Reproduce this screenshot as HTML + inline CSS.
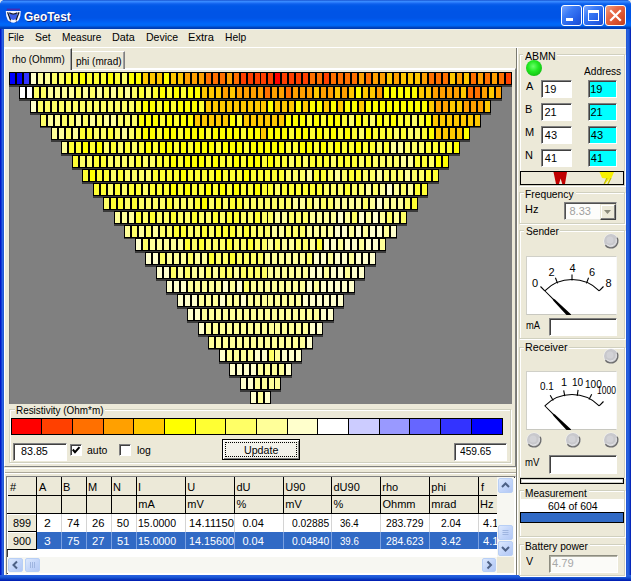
<!DOCTYPE html>
<html><head><meta charset="utf-8"><style>
*{box-sizing:border-box;margin:0;padding:0}
html,body{width:631px;height:581px;overflow:hidden;background:#dfe6f0}
body{position:relative;font-family:"Liberation Sans", sans-serif;font-size:11px;color:#000}
.a{position:absolute}
.t{position:absolute;white-space:nowrap;line-height:1;transform-origin:0 0}
.edit{position:absolute;background:#fff;border:1px solid;border-color:#7f9db9}
.gb{position:absolute;border:1px solid #d0d0bf;box-shadow:inset 1px 1px 0 #fff, 1px 1px 0 #fff}
.led{position:absolute;border-radius:50%}
</style></head><body>
<div class="a" style="left:0px;top:0px;width:631px;height:581px;background:#0046d8;border-radius:5px 5px 0 0"></div><div class="a" style="left:0px;top:0px;width:631px;height:29px;border-radius:5px 5px 0 0;background:linear-gradient(to bottom,#0a3fc0 0px,#3c8eff 1px,#3285ff 2px,#1e6ff5 3px,#0d60ec 4px,#0058e8 6px,#0054e6 12px,#0054e6 18px,#005cf2 21px,#0068fa 24px,#0064f0 26px,#0048c8 27px,#003aac 29px)"></div><div class="a" style="left:0px;top:29px;width:4px;height:552px;background:linear-gradient(to right,#0018c8 0,#0018c8 1px,#2a62e2 2px,#2a62e2 3px,#1e50c0 4px)"></div><div class="a" style="left:626px;top:29px;width:5px;height:552px;background:linear-gradient(to right,#1a4ec8 0,#2a62e2 1px,#1d5ad8 3px,#0018b0 5px)"></div><div class="a" style="left:0px;top:575px;width:631px;height:6px;background:linear-gradient(to bottom,#2a62e2 0,#1d5ad8 2px,#0a3cc0 4px,#0018b0 6px)"></div><svg class="a" style="left:4px;top:6px" width="20" height="20" viewBox="0 0 20 20">
<rect x="2.8" y="2.6" width="13.2" height="1.6" fill="#4a2ab0"/>
<path d="M1.8 5 H16.8 Q16.8 16.8 9.3 16.8 Q1.8 16.8 1.8 5 Z" fill="#f4f6ff"/>
<path d="M5 7 Q9.3 9.5 13.6 7 L12.5 12.8 Q9.3 15 6.1 12.8 Z" fill="#3a5ee8"/>
<path d="M3.6 6.2 L6.6 14.4 M15 6.2 L12 14.4 M5.2 6.8 Q9.3 9.3 13.4 6.8" stroke="#101830" stroke-width="1.3" fill="none"/>
<path d="M5.5 15.6 L7 16.4 M11.5 16.4 L13 15.6" stroke="#203080" stroke-width="1"/>
</svg><div class="t" style="left:23.74px;top:10px;font-size:13px;font-weight:bold;color:#fff;transform:scaleX(0.917);text-shadow:1px 1px 0 #0a1e7a;">GeoTest</div><div class="a" style="left:561px;top:5px;width:21px;height:21px;border:1px solid #fff;border-radius:3px;background:linear-gradient(135deg,#7aa6ff 0%,#3a7af5 35%,#2560e8 70%,#1c4cd0 100%)"><svg class="a" style="left:-1px;top:-1px" width="21" height="21"><rect x="5" y="13" width="7" height="3" fill="#fff"/></svg></div><div class="a" style="left:583px;top:5px;width:21px;height:21px;border:1px solid #fff;border-radius:3px;background:linear-gradient(135deg,#7aa6ff 0%,#3a7af5 35%,#2560e8 70%,#1c4cd0 100%)"><svg class="a" style="left:-1px;top:-1px" width="21" height="21"><rect x="5.5" y="5.5" width="10" height="10" fill="none" stroke="#fff" stroke-width="1"/><rect x="5" y="5" width="11" height="3" fill="#fff"/></svg></div><div class="a" style="left:605px;top:5px;width:21px;height:21px;border:1px solid #fff;border-radius:3px;background:linear-gradient(135deg,#f0a080 0%,#e86a48 35%,#d8502c 70%,#c04020 100%)"><svg class="a" style="left:-1px;top:-1px" width="21" height="21"><path d="M6 6 L15 15 M15 6 L6 15" stroke="#fff" stroke-width="2.2" stroke-linecap="square"/></svg></div><div class="a" style="left:4px;top:29px;width:622px;height:546px;background:#ece9d8"></div><div class="a" style="left:4px;top:29px;width:622px;height:1px;background:#e4ecf4"></div><div class="t" style="left:8.38px;top:32px;font-size:11px;color:#000;transform:scaleX(0.908);">File</div><div class="t" style="left:35.32px;top:32px;font-size:11px;color:#000;transform:scaleX(0.950);">Set</div><div class="t" style="left:62.37px;top:32px;font-size:11px;color:#000;transform:scaleX(0.918);">Measure</div><div class="t" style="left:112.32px;top:32px;font-size:11px;color:#000;transform:scaleX(0.982);">Data</div><div class="t" style="left:145.64px;top:32px;font-size:11px;color:#000;transform:scaleX(0.957);">Device</div><div class="t" style="left:188.39px;top:32px;font-size:11px;color:#000;transform:scaleX(1.012);">Extra</div><div class="t" style="left:224.66px;top:32px;font-size:11px;color:#000;transform:scaleX(0.934);">Help</div><div class="a" style="left:4px;top:47px;width:512px;height:1px;background:#fff"></div><div class="a" style="left:4px;top:68px;width:512px;height:399px;border:1px solid;border-color:#fff #808080 #808080 #fff;box-shadow:inset 0 1px 0 #fff;background:#ece9d8"></div><div class="a" style="left:71px;top:51px;width:54px;height:18px;border:1px solid;border-bottom:none;border-color:#fff #808080 #808080 #fff;background:#ece9d8;box-shadow:inset -1px 0 0 #a0a0a0"></div><div class="t" style="left:75.56px;top:56px;font-size:11px;color:#000;transform:scaleX(0.908);">phi (mrad)</div><div class="a" style="left:4px;top:48px;width:68px;height:22px;border:1px solid;border-bottom:none;border-color:#fff #404040 #808080 #fff;background:#ece9d8;box-shadow:inset -1px 0 0 #a0a0a0"></div><div class="t" style="left:12.18px;top:54px;font-size:11px;color:#000;transform:scaleX(0.889);">rho (Ohmm)</div><div class="a" style="left:9px;top:72px;width:503px;height:332px;background:#808080;border-left:1px solid #747474"></div><svg class="a" style="left:0;top:0" width="631" height="581"><g stroke="#000" stroke-width="1" shape-rendering="crispEdges"><rect x="9" y="84" width="503" height="3" fill="#3a3a3a" stroke="none"/><rect x="9.5" y="72.5" width="6" height="12" fill="#0000ff"/><rect x="16.5" y="72.5" width="6" height="12" fill="#0000ff"/><rect x="23.5" y="72.5" width="6" height="12" fill="#3333ff"/><rect x="30.5" y="72.5" width="6" height="12" fill="#ffffcc"/><rect x="37.5" y="72.5" width="6" height="12" fill="#ffff99"/><rect x="44.5" y="72.5" width="6" height="12" fill="#ffff99"/><rect x="51.5" y="72.5" width="6" height="12" fill="#ffff66"/><rect x="58.5" y="72.5" width="6" height="12" fill="#ffff66"/><rect x="65.5" y="72.5" width="6" height="12" fill="#ffff33"/><rect x="72.5" y="72.5" width="6" height="12" fill="#ffff33"/><rect x="79.5" y="72.5" width="6" height="12" fill="#ffff00"/><rect x="86.5" y="72.5" width="6" height="12" fill="#ffff33"/><rect x="93.5" y="72.5" width="6" height="12" fill="#ffff33"/><rect x="100.5" y="72.5" width="6" height="12" fill="#ffff33"/><rect x="107.5" y="72.5" width="6" height="12" fill="#ffff00"/><rect x="114.5" y="72.5" width="6" height="12" fill="#ffff33"/><rect x="121.5" y="72.5" width="6" height="12" fill="#ffff66"/><rect x="128.5" y="72.5" width="6" height="12" fill="#ffff00"/><rect x="135.5" y="72.5" width="6" height="12" fill="#ffff00"/><rect x="142.5" y="72.5" width="6" height="12" fill="#ffc800"/><rect x="149.5" y="72.5" width="6" height="12" fill="#ffc800"/><rect x="156.5" y="72.5" width="6" height="12" fill="#ffc800"/><rect x="163.5" y="72.5" width="6" height="12" fill="#ffff00"/><rect x="170.5" y="72.5" width="6" height="12" fill="#ffc800"/><rect x="177.5" y="72.5" width="6" height="12" fill="#ffc800"/><rect x="184.5" y="72.5" width="6" height="12" fill="#ffa000"/><rect x="191.5" y="72.5" width="6" height="12" fill="#ffa000"/><rect x="198.5" y="72.5" width="6" height="12" fill="#ffa000"/><rect x="205.5" y="72.5" width="6" height="12" fill="#ff7000"/><rect x="212.5" y="72.5" width="6" height="12" fill="#ff7000"/><rect x="219.5" y="72.5" width="6" height="12" fill="#ff7000"/><rect x="226.5" y="72.5" width="6" height="12" fill="#ffa000"/><rect x="233.5" y="72.5" width="6" height="12" fill="#ff7000"/><rect x="240.5" y="72.5" width="6" height="12" fill="#ff4000"/><rect x="247.5" y="72.5" width="6" height="12" fill="#ff4000"/><rect x="254.5" y="72.5" width="6" height="12" fill="#ff4000"/><rect x="260.5" y="72.5" width="6" height="12" fill="#ff4000"/><rect x="267.5" y="72.5" width="6" height="12" fill="#ff4000"/><rect x="274.5" y="72.5" width="6" height="12" fill="#ff0000"/><rect x="281.5" y="72.5" width="6" height="12" fill="#ff4000"/><rect x="288.5" y="72.5" width="6" height="12" fill="#ff4000"/><rect x="295.5" y="72.5" width="6" height="12" fill="#ff4000"/><rect x="302.5" y="72.5" width="6" height="12" fill="#ff4000"/><rect x="309.5" y="72.5" width="6" height="12" fill="#ff7000"/><rect x="316.5" y="72.5" width="6" height="12" fill="#ff7000"/><rect x="323.5" y="72.5" width="6" height="12" fill="#ff4000"/><rect x="330.5" y="72.5" width="6" height="12" fill="#ff7000"/><rect x="337.5" y="72.5" width="6" height="12" fill="#ff7000"/><rect x="344.5" y="72.5" width="6" height="12" fill="#ff7000"/><rect x="351.5" y="72.5" width="6" height="12" fill="#ff7000"/><rect x="358.5" y="72.5" width="6" height="12" fill="#ffa000"/><rect x="365.5" y="72.5" width="6" height="12" fill="#ff7000"/><rect x="372.5" y="72.5" width="6" height="12" fill="#ffa000"/><rect x="379.5" y="72.5" width="6" height="12" fill="#ffa000"/><rect x="386.5" y="72.5" width="6" height="12" fill="#ffc800"/><rect x="393.5" y="72.5" width="6" height="12" fill="#ffa000"/><rect x="400.5" y="72.5" width="6" height="12" fill="#ffc800"/><rect x="407.5" y="72.5" width="6" height="12" fill="#ffc800"/><rect x="414.5" y="72.5" width="6" height="12" fill="#ffc800"/><rect x="421.5" y="72.5" width="6" height="12" fill="#ffa000"/><rect x="428.5" y="72.5" width="6" height="12" fill="#ff7000"/><rect x="435.5" y="72.5" width="6" height="12" fill="#ff7000"/><rect x="442.5" y="72.5" width="6" height="12" fill="#ff7000"/><rect x="449.5" y="72.5" width="6" height="12" fill="#ffc800"/><rect x="456.5" y="72.5" width="6" height="12" fill="#ffa000"/><rect x="463.5" y="72.5" width="6" height="12" fill="#ffc800"/><rect x="470.5" y="72.5" width="6" height="12" fill="#ff7000"/><rect x="477.5" y="72.5" width="6" height="12" fill="#ffa000"/><rect x="484.5" y="72.5" width="6" height="12" fill="#ff7000"/><rect x="491.5" y="72.5" width="6" height="12" fill="#ffa000"/><rect x="498.5" y="72.5" width="6" height="12" fill="#ff7000"/><rect x="505.5" y="72.5" width="6" height="12" fill="#ff4000"/><rect x="19" y="98" width="483" height="3" fill="#3a3a3a" stroke="none"/><rect x="19.5" y="86.5" width="6" height="12" fill="#ffffff"/><rect x="26.5" y="86.5" width="6" height="12" fill="#ffffff"/><rect x="33.5" y="86.5" width="6" height="12" fill="#ffff66"/><rect x="40.5" y="86.5" width="6" height="12" fill="#ffff66"/><rect x="47.5" y="86.5" width="6" height="12" fill="#ffff99"/><rect x="54.5" y="86.5" width="6" height="12" fill="#ffff99"/><rect x="61.5" y="86.5" width="6" height="12" fill="#ffff99"/><rect x="68.5" y="86.5" width="6" height="12" fill="#ffff99"/><rect x="75.5" y="86.5" width="6" height="12" fill="#ffff66"/><rect x="82.5" y="86.5" width="6" height="12" fill="#ffff99"/><rect x="89.5" y="86.5" width="6" height="12" fill="#ffff66"/><rect x="96.5" y="86.5" width="6" height="12" fill="#ffff99"/><rect x="103.5" y="86.5" width="6" height="12" fill="#ffff66"/><rect x="110.5" y="86.5" width="6" height="12" fill="#ffff99"/><rect x="117.5" y="86.5" width="6" height="12" fill="#ffff66"/><rect x="124.5" y="86.5" width="6" height="12" fill="#ffff99"/><rect x="131.5" y="86.5" width="6" height="12" fill="#ffff66"/><rect x="138.5" y="86.5" width="6" height="12" fill="#ffff33"/><rect x="145.5" y="86.5" width="6" height="12" fill="#ffff66"/><rect x="152.5" y="86.5" width="6" height="12" fill="#ffff33"/><rect x="159.5" y="86.5" width="6" height="12" fill="#ffff00"/><rect x="166.5" y="86.5" width="6" height="12" fill="#ffff33"/><rect x="173.5" y="86.5" width="6" height="12" fill="#ffff00"/><rect x="180.5" y="86.5" width="6" height="12" fill="#ffff33"/><rect x="187.5" y="86.5" width="6" height="12" fill="#ffff00"/><rect x="194.5" y="86.5" width="6" height="12" fill="#ffff00"/><rect x="201.5" y="86.5" width="6" height="12" fill="#ffc800"/><rect x="208.5" y="86.5" width="6" height="12" fill="#ffc800"/><rect x="215.5" y="86.5" width="6" height="12" fill="#ffc800"/><rect x="222.5" y="86.5" width="6" height="12" fill="#ffa000"/><rect x="229.5" y="86.5" width="6" height="12" fill="#ffc800"/><rect x="236.5" y="86.5" width="6" height="12" fill="#ffa000"/><rect x="243.5" y="86.5" width="6" height="12" fill="#ffa000"/><rect x="250.5" y="86.5" width="6" height="12" fill="#ffa000"/><rect x="257.5" y="86.5" width="6" height="12" fill="#ffa000"/><rect x="264.5" y="86.5" width="6" height="12" fill="#ff7000"/><rect x="271.5" y="86.5" width="6" height="12" fill="#ffa000"/><rect x="278.5" y="86.5" width="6" height="12" fill="#ffa000"/><rect x="285.5" y="86.5" width="6" height="12" fill="#ff7000"/><rect x="292.5" y="86.5" width="6" height="12" fill="#ffa000"/><rect x="299.5" y="86.5" width="6" height="12" fill="#ffa000"/><rect x="306.5" y="86.5" width="6" height="12" fill="#ffa000"/><rect x="313.5" y="86.5" width="6" height="12" fill="#ffc800"/><rect x="320.5" y="86.5" width="6" height="12" fill="#ffa000"/><rect x="327.5" y="86.5" width="6" height="12" fill="#ffa000"/><rect x="334.5" y="86.5" width="6" height="12" fill="#ffc800"/><rect x="341.5" y="86.5" width="6" height="12" fill="#ffa000"/><rect x="348.5" y="86.5" width="6" height="12" fill="#ffc800"/><rect x="355.5" y="86.5" width="6" height="12" fill="#ffff00"/><rect x="362.5" y="86.5" width="6" height="12" fill="#ffc800"/><rect x="369.5" y="86.5" width="6" height="12" fill="#ffc800"/><rect x="376.5" y="86.5" width="6" height="12" fill="#ffa000"/><rect x="383.5" y="86.5" width="6" height="12" fill="#ffff00"/><rect x="390.5" y="86.5" width="6" height="12" fill="#ffff00"/><rect x="397.5" y="86.5" width="6" height="12" fill="#ffff00"/><rect x="404.5" y="86.5" width="6" height="12" fill="#ffff00"/><rect x="411.5" y="86.5" width="6" height="12" fill="#ffff00"/><rect x="418.5" y="86.5" width="6" height="12" fill="#ffc800"/><rect x="425.5" y="86.5" width="6" height="12" fill="#ffc800"/><rect x="432.5" y="86.5" width="6" height="12" fill="#ffa000"/><rect x="439.5" y="86.5" width="6" height="12" fill="#ffa000"/><rect x="446.5" y="86.5" width="6" height="12" fill="#ffa000"/><rect x="453.5" y="86.5" width="6" height="12" fill="#ffa000"/><rect x="460.5" y="86.5" width="6" height="12" fill="#ffc800"/><rect x="467.5" y="86.5" width="6" height="12" fill="#ff7000"/><rect x="474.5" y="86.5" width="6" height="12" fill="#ff7000"/><rect x="481.5" y="86.5" width="6" height="12" fill="#ffa000"/><rect x="488.5" y="86.5" width="6" height="12" fill="#ffc800"/><rect x="495.5" y="86.5" width="6" height="12" fill="#ffa000"/><rect x="30" y="112" width="461" height="3" fill="#3a3a3a" stroke="none"/><rect x="30.5" y="100.5" width="6" height="12" fill="#ffffcc"/><rect x="37.5" y="100.5" width="6" height="12" fill="#ffff66"/><rect x="44.5" y="100.5" width="6" height="12" fill="#ffff66"/><rect x="51.5" y="100.5" width="6" height="12" fill="#ffff66"/><rect x="58.5" y="100.5" width="6" height="12" fill="#ffff66"/><rect x="65.5" y="100.5" width="6" height="12" fill="#ffff66"/><rect x="72.5" y="100.5" width="6" height="12" fill="#ffff66"/><rect x="79.5" y="100.5" width="6" height="12" fill="#ffff66"/><rect x="86.5" y="100.5" width="6" height="12" fill="#ffff66"/><rect x="93.5" y="100.5" width="6" height="12" fill="#ffff66"/><rect x="100.5" y="100.5" width="6" height="12" fill="#ffff66"/><rect x="107.5" y="100.5" width="6" height="12" fill="#ffff66"/><rect x="114.5" y="100.5" width="6" height="12" fill="#ffff66"/><rect x="121.5" y="100.5" width="6" height="12" fill="#ffff66"/><rect x="128.5" y="100.5" width="6" height="12" fill="#ffff66"/><rect x="135.5" y="100.5" width="6" height="12" fill="#ffff33"/><rect x="142.5" y="100.5" width="6" height="12" fill="#ffff00"/><rect x="149.5" y="100.5" width="6" height="12" fill="#ffff00"/><rect x="156.5" y="100.5" width="6" height="12" fill="#ffff33"/><rect x="163.5" y="100.5" width="6" height="12" fill="#ffff00"/><rect x="170.5" y="100.5" width="6" height="12" fill="#ffff33"/><rect x="177.5" y="100.5" width="6" height="12" fill="#ffff00"/><rect x="184.5" y="100.5" width="6" height="12" fill="#ffff00"/><rect x="191.5" y="100.5" width="6" height="12" fill="#ffff00"/><rect x="198.5" y="100.5" width="6" height="12" fill="#ffff33"/><rect x="205.5" y="100.5" width="6" height="12" fill="#ffc800"/><rect x="212.5" y="100.5" width="6" height="12" fill="#ffc800"/><rect x="219.5" y="100.5" width="6" height="12" fill="#ffc800"/><rect x="226.5" y="100.5" width="6" height="12" fill="#ffc800"/><rect x="233.5" y="100.5" width="6" height="12" fill="#ffc800"/><rect x="240.5" y="100.5" width="6" height="12" fill="#ffc800"/><rect x="247.5" y="100.5" width="6" height="12" fill="#ffc800"/><rect x="254.5" y="100.5" width="6" height="12" fill="#ffc800"/><rect x="260.5" y="100.5" width="6" height="12" fill="#ffc800"/><rect x="267.5" y="100.5" width="6" height="12" fill="#ffff00"/><rect x="274.5" y="100.5" width="6" height="12" fill="#ffc800"/><rect x="281.5" y="100.5" width="6" height="12" fill="#ffc800"/><rect x="288.5" y="100.5" width="6" height="12" fill="#ffc800"/><rect x="295.5" y="100.5" width="6" height="12" fill="#ffff00"/><rect x="302.5" y="100.5" width="6" height="12" fill="#ffc800"/><rect x="309.5" y="100.5" width="6" height="12" fill="#ffff00"/><rect x="316.5" y="100.5" width="6" height="12" fill="#ffff00"/><rect x="323.5" y="100.5" width="6" height="12" fill="#ffc800"/><rect x="330.5" y="100.5" width="6" height="12" fill="#ffff00"/><rect x="337.5" y="100.5" width="6" height="12" fill="#ffc800"/><rect x="344.5" y="100.5" width="6" height="12" fill="#ffff00"/><rect x="351.5" y="100.5" width="6" height="12" fill="#ffff00"/><rect x="358.5" y="100.5" width="6" height="12" fill="#ffc800"/><rect x="365.5" y="100.5" width="6" height="12" fill="#ffff00"/><rect x="372.5" y="100.5" width="6" height="12" fill="#ffff00"/><rect x="379.5" y="100.5" width="6" height="12" fill="#ffff00"/><rect x="386.5" y="100.5" width="6" height="12" fill="#ffff00"/><rect x="393.5" y="100.5" width="6" height="12" fill="#ffff00"/><rect x="400.5" y="100.5" width="6" height="12" fill="#ffff00"/><rect x="407.5" y="100.5" width="6" height="12" fill="#ffff00"/><rect x="414.5" y="100.5" width="6" height="12" fill="#ffff00"/><rect x="421.5" y="100.5" width="6" height="12" fill="#ffff00"/><rect x="428.5" y="100.5" width="6" height="12" fill="#ffc800"/><rect x="435.5" y="100.5" width="6" height="12" fill="#ffa000"/><rect x="442.5" y="100.5" width="6" height="12" fill="#ffa000"/><rect x="449.5" y="100.5" width="6" height="12" fill="#ffc800"/><rect x="456.5" y="100.5" width="6" height="12" fill="#ffc800"/><rect x="463.5" y="100.5" width="6" height="12" fill="#ffa000"/><rect x="470.5" y="100.5" width="6" height="12" fill="#ffa000"/><rect x="477.5" y="100.5" width="6" height="12" fill="#ffa000"/><rect x="484.5" y="100.5" width="6" height="12" fill="#ffc800"/><rect x="40" y="126" width="441" height="2" fill="#3a3a3a" stroke="none"/><rect x="40.5" y="114.5" width="6" height="12" fill="#ffff66"/><rect x="47.5" y="114.5" width="6" height="12" fill="#ffff99"/><rect x="54.5" y="114.5" width="6" height="12" fill="#ffff99"/><rect x="61.5" y="114.5" width="6" height="12" fill="#ffff66"/><rect x="68.5" y="114.5" width="6" height="12" fill="#ffff66"/><rect x="75.5" y="114.5" width="6" height="12" fill="#ffff99"/><rect x="82.5" y="114.5" width="6" height="12" fill="#ffff66"/><rect x="89.5" y="114.5" width="6" height="12" fill="#ffff99"/><rect x="96.5" y="114.5" width="6" height="12" fill="#ffff66"/><rect x="103.5" y="114.5" width="6" height="12" fill="#ffff99"/><rect x="110.5" y="114.5" width="6" height="12" fill="#ffff99"/><rect x="117.5" y="114.5" width="6" height="12" fill="#ffff66"/><rect x="124.5" y="114.5" width="6" height="12" fill="#ffff66"/><rect x="131.5" y="114.5" width="6" height="12" fill="#ffff66"/><rect x="138.5" y="114.5" width="6" height="12" fill="#ffff00"/><rect x="145.5" y="114.5" width="6" height="12" fill="#ffff00"/><rect x="152.5" y="114.5" width="6" height="12" fill="#ffff00"/><rect x="159.5" y="114.5" width="6" height="12" fill="#ffff33"/><rect x="166.5" y="114.5" width="6" height="12" fill="#ffff00"/><rect x="173.5" y="114.5" width="6" height="12" fill="#ffff33"/><rect x="180.5" y="114.5" width="6" height="12" fill="#ffff00"/><rect x="187.5" y="114.5" width="6" height="12" fill="#ffff00"/><rect x="194.5" y="114.5" width="6" height="12" fill="#ffc800"/><rect x="201.5" y="114.5" width="6" height="12" fill="#ffc800"/><rect x="208.5" y="114.5" width="6" height="12" fill="#ffc800"/><rect x="215.5" y="114.5" width="6" height="12" fill="#ffc800"/><rect x="222.5" y="114.5" width="6" height="12" fill="#ffc800"/><rect x="229.5" y="114.5" width="6" height="12" fill="#ffff00"/><rect x="236.5" y="114.5" width="6" height="12" fill="#ffff33"/><rect x="243.5" y="114.5" width="6" height="12" fill="#ffc800"/><rect x="250.5" y="114.5" width="6" height="12" fill="#ffc800"/><rect x="257.5" y="114.5" width="6" height="12" fill="#ffc800"/><rect x="264.5" y="114.5" width="6" height="12" fill="#ffc800"/><rect x="271.5" y="114.5" width="6" height="12" fill="#ffc800"/><rect x="278.5" y="114.5" width="6" height="12" fill="#ffc800"/><rect x="285.5" y="114.5" width="6" height="12" fill="#ffff00"/><rect x="292.5" y="114.5" width="6" height="12" fill="#ffff00"/><rect x="299.5" y="114.5" width="6" height="12" fill="#ffff00"/><rect x="306.5" y="114.5" width="6" height="12" fill="#ffff33"/><rect x="313.5" y="114.5" width="6" height="12" fill="#ffff00"/><rect x="320.5" y="114.5" width="6" height="12" fill="#ffff33"/><rect x="327.5" y="114.5" width="6" height="12" fill="#ffff00"/><rect x="334.5" y="114.5" width="6" height="12" fill="#ffff00"/><rect x="341.5" y="114.5" width="6" height="12" fill="#ffff33"/><rect x="348.5" y="114.5" width="6" height="12" fill="#ffff66"/><rect x="355.5" y="114.5" width="6" height="12" fill="#ffff00"/><rect x="362.5" y="114.5" width="6" height="12" fill="#ffff33"/><rect x="369.5" y="114.5" width="6" height="12" fill="#ffff66"/><rect x="376.5" y="114.5" width="6" height="12" fill="#ffff00"/><rect x="383.5" y="114.5" width="6" height="12" fill="#ffff33"/><rect x="390.5" y="114.5" width="6" height="12" fill="#ffff00"/><rect x="397.5" y="114.5" width="6" height="12" fill="#ffff33"/><rect x="404.5" y="114.5" width="6" height="12" fill="#ffff33"/><rect x="411.5" y="114.5" width="6" height="12" fill="#ffff66"/><rect x="418.5" y="114.5" width="6" height="12" fill="#ffff33"/><rect x="425.5" y="114.5" width="6" height="12" fill="#ffff00"/><rect x="432.5" y="114.5" width="6" height="12" fill="#ffc800"/><rect x="439.5" y="114.5" width="6" height="12" fill="#ffc800"/><rect x="446.5" y="114.5" width="6" height="12" fill="#ffc800"/><rect x="453.5" y="114.5" width="6" height="12" fill="#ffc800"/><rect x="460.5" y="114.5" width="6" height="12" fill="#ffc800"/><rect x="467.5" y="114.5" width="6" height="12" fill="#ffc800"/><rect x="474.5" y="114.5" width="6" height="12" fill="#ffc800"/><rect x="51" y="139" width="419" height="3" fill="#3a3a3a" stroke="none"/><rect x="51.5" y="127.5" width="6" height="12" fill="#ffff99"/><rect x="58.5" y="127.5" width="6" height="12" fill="#ffff99"/><rect x="65.5" y="127.5" width="6" height="12" fill="#ffff66"/><rect x="72.5" y="127.5" width="6" height="12" fill="#ffff99"/><rect x="79.5" y="127.5" width="6" height="12" fill="#ffff33"/><rect x="86.5" y="127.5" width="6" height="12" fill="#ffff33"/><rect x="93.5" y="127.5" width="6" height="12" fill="#ffff66"/><rect x="100.5" y="127.5" width="6" height="12" fill="#ffff66"/><rect x="107.5" y="127.5" width="6" height="12" fill="#ffff33"/><rect x="114.5" y="127.5" width="6" height="12" fill="#ffff66"/><rect x="121.5" y="127.5" width="6" height="12" fill="#ffff99"/><rect x="128.5" y="127.5" width="6" height="12" fill="#ffff66"/><rect x="135.5" y="127.5" width="6" height="12" fill="#ffff33"/><rect x="142.5" y="127.5" width="6" height="12" fill="#ffff00"/><rect x="149.5" y="127.5" width="6" height="12" fill="#ffff00"/><rect x="156.5" y="127.5" width="6" height="12" fill="#ffff33"/><rect x="163.5" y="127.5" width="6" height="12" fill="#ffff00"/><rect x="170.5" y="127.5" width="6" height="12" fill="#ffff00"/><rect x="177.5" y="127.5" width="6" height="12" fill="#ffff33"/><rect x="184.5" y="127.5" width="6" height="12" fill="#ffff00"/><rect x="191.5" y="127.5" width="6" height="12" fill="#ffff00"/><rect x="198.5" y="127.5" width="6" height="12" fill="#ffff00"/><rect x="205.5" y="127.5" width="6" height="12" fill="#ffff33"/><rect x="212.5" y="127.5" width="6" height="12" fill="#ffff00"/><rect x="219.5" y="127.5" width="6" height="12" fill="#ffff00"/><rect x="226.5" y="127.5" width="6" height="12" fill="#ffff00"/><rect x="233.5" y="127.5" width="6" height="12" fill="#ffff00"/><rect x="240.5" y="127.5" width="6" height="12" fill="#ffff33"/><rect x="247.5" y="127.5" width="6" height="12" fill="#ffff00"/><rect x="254.5" y="127.5" width="6" height="12" fill="#ffff00"/><rect x="260.5" y="127.5" width="6" height="12" fill="#ffc800"/><rect x="267.5" y="127.5" width="6" height="12" fill="#ffff00"/><rect x="274.5" y="127.5" width="6" height="12" fill="#ffff00"/><rect x="281.5" y="127.5" width="6" height="12" fill="#ffff00"/><rect x="288.5" y="127.5" width="6" height="12" fill="#ffff33"/><rect x="295.5" y="127.5" width="6" height="12" fill="#ffff00"/><rect x="302.5" y="127.5" width="6" height="12" fill="#ffff00"/><rect x="309.5" y="127.5" width="6" height="12" fill="#ffff33"/><rect x="316.5" y="127.5" width="6" height="12" fill="#ffff00"/><rect x="323.5" y="127.5" width="6" height="12" fill="#ffff33"/><rect x="330.5" y="127.5" width="6" height="12" fill="#ffff00"/><rect x="337.5" y="127.5" width="6" height="12" fill="#ffff33"/><rect x="344.5" y="127.5" width="6" height="12" fill="#ffff00"/><rect x="351.5" y="127.5" width="6" height="12" fill="#ffff33"/><rect x="358.5" y="127.5" width="6" height="12" fill="#ffff66"/><rect x="365.5" y="127.5" width="6" height="12" fill="#ffff00"/><rect x="372.5" y="127.5" width="6" height="12" fill="#ffff33"/><rect x="379.5" y="127.5" width="6" height="12" fill="#ffff33"/><rect x="386.5" y="127.5" width="6" height="12" fill="#ffff33"/><rect x="393.5" y="127.5" width="6" height="12" fill="#ffff66"/><rect x="400.5" y="127.5" width="6" height="12" fill="#ffff33"/><rect x="407.5" y="127.5" width="6" height="12" fill="#ffff66"/><rect x="414.5" y="127.5" width="6" height="12" fill="#ffff66"/><rect x="421.5" y="127.5" width="6" height="12" fill="#ffff33"/><rect x="428.5" y="127.5" width="6" height="12" fill="#ffff00"/><rect x="435.5" y="127.5" width="6" height="12" fill="#ffc800"/><rect x="442.5" y="127.5" width="6" height="12" fill="#ffc800"/><rect x="449.5" y="127.5" width="6" height="12" fill="#ffc800"/><rect x="456.5" y="127.5" width="6" height="12" fill="#ffc800"/><rect x="463.5" y="127.5" width="6" height="12" fill="#ffff00"/><rect x="61" y="153" width="399" height="3" fill="#3a3a3a" stroke="none"/><rect x="61.5" y="141.5" width="6" height="12" fill="#ffff99"/><rect x="68.5" y="141.5" width="6" height="12" fill="#ffff33"/><rect x="75.5" y="141.5" width="6" height="12" fill="#ffff33"/><rect x="82.5" y="141.5" width="6" height="12" fill="#ffff00"/><rect x="89.5" y="141.5" width="6" height="12" fill="#ffff33"/><rect x="96.5" y="141.5" width="6" height="12" fill="#ffff00"/><rect x="103.5" y="141.5" width="6" height="12" fill="#ffff66"/><rect x="110.5" y="141.5" width="6" height="12" fill="#ffff33"/><rect x="117.5" y="141.5" width="6" height="12" fill="#ffff66"/><rect x="124.5" y="141.5" width="6" height="12" fill="#ffff33"/><rect x="131.5" y="141.5" width="6" height="12" fill="#ffff66"/><rect x="138.5" y="141.5" width="6" height="12" fill="#ffff33"/><rect x="145.5" y="141.5" width="6" height="12" fill="#ffff00"/><rect x="152.5" y="141.5" width="6" height="12" fill="#ffff33"/><rect x="159.5" y="141.5" width="6" height="12" fill="#ffff00"/><rect x="166.5" y="141.5" width="6" height="12" fill="#ffff00"/><rect x="173.5" y="141.5" width="6" height="12" fill="#ffff33"/><rect x="180.5" y="141.5" width="6" height="12" fill="#ffff00"/><rect x="187.5" y="141.5" width="6" height="12" fill="#ffff33"/><rect x="194.5" y="141.5" width="6" height="12" fill="#ffff00"/><rect x="201.5" y="141.5" width="6" height="12" fill="#ffff00"/><rect x="208.5" y="141.5" width="6" height="12" fill="#ffff00"/><rect x="215.5" y="141.5" width="6" height="12" fill="#ffff33"/><rect x="222.5" y="141.5" width="6" height="12" fill="#ffff00"/><rect x="229.5" y="141.5" width="6" height="12" fill="#ffff00"/><rect x="236.5" y="141.5" width="6" height="12" fill="#ffff00"/><rect x="243.5" y="141.5" width="6" height="12" fill="#ffff33"/><rect x="250.5" y="141.5" width="6" height="12" fill="#ffff00"/><rect x="257.5" y="141.5" width="6" height="12" fill="#ffff00"/><rect x="264.5" y="141.5" width="6" height="12" fill="#ffff00"/><rect x="271.5" y="141.5" width="6" height="12" fill="#ffff00"/><rect x="278.5" y="141.5" width="6" height="12" fill="#ffff00"/><rect x="285.5" y="141.5" width="6" height="12" fill="#ffff33"/><rect x="292.5" y="141.5" width="6" height="12" fill="#ffff33"/><rect x="299.5" y="141.5" width="6" height="12" fill="#ffff00"/><rect x="306.5" y="141.5" width="6" height="12" fill="#ffff00"/><rect x="313.5" y="141.5" width="6" height="12" fill="#ffff33"/><rect x="320.5" y="141.5" width="6" height="12" fill="#ffff00"/><rect x="327.5" y="141.5" width="6" height="12" fill="#ffff33"/><rect x="334.5" y="141.5" width="6" height="12" fill="#ffff00"/><rect x="341.5" y="141.5" width="6" height="12" fill="#ffff33"/><rect x="348.5" y="141.5" width="6" height="12" fill="#ffff33"/><rect x="355.5" y="141.5" width="6" height="12" fill="#ffff00"/><rect x="362.5" y="141.5" width="6" height="12" fill="#ffff33"/><rect x="369.5" y="141.5" width="6" height="12" fill="#ffff33"/><rect x="376.5" y="141.5" width="6" height="12" fill="#ffff66"/><rect x="383.5" y="141.5" width="6" height="12" fill="#ffff33"/><rect x="390.5" y="141.5" width="6" height="12" fill="#ffff99"/><rect x="397.5" y="141.5" width="6" height="12" fill="#ffff99"/><rect x="404.5" y="141.5" width="6" height="12" fill="#ffff66"/><rect x="411.5" y="141.5" width="6" height="12" fill="#ffff66"/><rect x="418.5" y="141.5" width="6" height="12" fill="#ffff66"/><rect x="425.5" y="141.5" width="6" height="12" fill="#ffff33"/><rect x="432.5" y="141.5" width="6" height="12" fill="#ffff33"/><rect x="439.5" y="141.5" width="6" height="12" fill="#ffff33"/><rect x="446.5" y="141.5" width="6" height="12" fill="#ffff33"/><rect x="453.5" y="141.5" width="6" height="12" fill="#ffff00"/><rect x="72" y="167" width="377" height="3" fill="#3a3a3a" stroke="none"/><rect x="72.5" y="155.5" width="6" height="12" fill="#ffff33"/><rect x="79.5" y="155.5" width="6" height="12" fill="#ffff66"/><rect x="86.5" y="155.5" width="6" height="12" fill="#ffff66"/><rect x="93.5" y="155.5" width="6" height="12" fill="#ffff33"/><rect x="100.5" y="155.5" width="6" height="12" fill="#ffff33"/><rect x="107.5" y="155.5" width="6" height="12" fill="#ffff66"/><rect x="114.5" y="155.5" width="6" height="12" fill="#ffff66"/><rect x="121.5" y="155.5" width="6" height="12" fill="#ffff66"/><rect x="128.5" y="155.5" width="6" height="12" fill="#ffff66"/><rect x="135.5" y="155.5" width="6" height="12" fill="#ffff33"/><rect x="142.5" y="155.5" width="6" height="12" fill="#ffff66"/><rect x="149.5" y="155.5" width="6" height="12" fill="#ffff66"/><rect x="156.5" y="155.5" width="6" height="12" fill="#ffff33"/><rect x="163.5" y="155.5" width="6" height="12" fill="#ffff33"/><rect x="170.5" y="155.5" width="6" height="12" fill="#ffff00"/><rect x="177.5" y="155.5" width="6" height="12" fill="#ffff33"/><rect x="184.5" y="155.5" width="6" height="12" fill="#ffff00"/><rect x="191.5" y="155.5" width="6" height="12" fill="#ffff00"/><rect x="198.5" y="155.5" width="6" height="12" fill="#ffff00"/><rect x="205.5" y="155.5" width="6" height="12" fill="#ffff33"/><rect x="212.5" y="155.5" width="6" height="12" fill="#ffff00"/><rect x="219.5" y="155.5" width="6" height="12" fill="#ffff33"/><rect x="226.5" y="155.5" width="6" height="12" fill="#ffff33"/><rect x="233.5" y="155.5" width="6" height="12" fill="#ffff00"/><rect x="240.5" y="155.5" width="6" height="12" fill="#ffff33"/><rect x="247.5" y="155.5" width="6" height="12" fill="#ffff00"/><rect x="254.5" y="155.5" width="6" height="12" fill="#ffff00"/><rect x="261.5" y="155.5" width="6" height="12" fill="#ffff33"/><rect x="267.5" y="155.5" width="6" height="12" fill="#ffff00"/><rect x="274.5" y="155.5" width="6" height="12" fill="#ffff33"/><rect x="281.5" y="155.5" width="6" height="12" fill="#ffff33"/><rect x="288.5" y="155.5" width="6" height="12" fill="#ffff66"/><rect x="295.5" y="155.5" width="6" height="12" fill="#ffff33"/><rect x="302.5" y="155.5" width="6" height="12" fill="#ffff66"/><rect x="309.5" y="155.5" width="6" height="12" fill="#ffff33"/><rect x="316.5" y="155.5" width="6" height="12" fill="#ffff33"/><rect x="323.5" y="155.5" width="6" height="12" fill="#ffff33"/><rect x="330.5" y="155.5" width="6" height="12" fill="#ffff66"/><rect x="337.5" y="155.5" width="6" height="12" fill="#ffff33"/><rect x="344.5" y="155.5" width="6" height="12" fill="#ffff33"/><rect x="351.5" y="155.5" width="6" height="12" fill="#ffff33"/><rect x="358.5" y="155.5" width="6" height="12" fill="#ffff66"/><rect x="365.5" y="155.5" width="6" height="12" fill="#ffff33"/><rect x="372.5" y="155.5" width="6" height="12" fill="#ffff66"/><rect x="379.5" y="155.5" width="6" height="12" fill="#ffff66"/><rect x="386.5" y="155.5" width="6" height="12" fill="#ffff66"/><rect x="393.5" y="155.5" width="6" height="12" fill="#ffff66"/><rect x="400.5" y="155.5" width="6" height="12" fill="#ffff99"/><rect x="407.5" y="155.5" width="6" height="12" fill="#ffff99"/><rect x="414.5" y="155.5" width="6" height="12" fill="#ffff33"/><rect x="421.5" y="155.5" width="6" height="12" fill="#ffff33"/><rect x="428.5" y="155.5" width="6" height="12" fill="#ffff66"/><rect x="435.5" y="155.5" width="6" height="12" fill="#ffff00"/><rect x="442.5" y="155.5" width="6" height="12" fill="#ffff00"/><rect x="82" y="181" width="357" height="3" fill="#3a3a3a" stroke="none"/><rect x="82.5" y="169.5" width="6" height="12" fill="#ffff33"/><rect x="89.5" y="169.5" width="6" height="12" fill="#ffff00"/><rect x="96.5" y="169.5" width="6" height="12" fill="#ffff33"/><rect x="103.5" y="169.5" width="6" height="12" fill="#ffff33"/><rect x="110.5" y="169.5" width="6" height="12" fill="#ffff66"/><rect x="117.5" y="169.5" width="6" height="12" fill="#ffff33"/><rect x="124.5" y="169.5" width="6" height="12" fill="#ffff66"/><rect x="131.5" y="169.5" width="6" height="12" fill="#ffff66"/><rect x="138.5" y="169.5" width="6" height="12" fill="#ffff66"/><rect x="145.5" y="169.5" width="6" height="12" fill="#ffff66"/><rect x="152.5" y="169.5" width="6" height="12" fill="#ffff33"/><rect x="159.5" y="169.5" width="6" height="12" fill="#ffff33"/><rect x="166.5" y="169.5" width="6" height="12" fill="#ffff33"/><rect x="173.5" y="169.5" width="6" height="12" fill="#ffff33"/><rect x="180.5" y="169.5" width="6" height="12" fill="#ffff00"/><rect x="187.5" y="169.5" width="6" height="12" fill="#ffff33"/><rect x="194.5" y="169.5" width="6" height="12" fill="#ffff33"/><rect x="201.5" y="169.5" width="6" height="12" fill="#ffff33"/><rect x="208.5" y="169.5" width="6" height="12" fill="#ffff33"/><rect x="215.5" y="169.5" width="6" height="12" fill="#ffff00"/><rect x="222.5" y="169.5" width="6" height="12" fill="#ffff33"/><rect x="229.5" y="169.5" width="6" height="12" fill="#ffff33"/><rect x="236.5" y="169.5" width="6" height="12" fill="#ffff33"/><rect x="243.5" y="169.5" width="6" height="12" fill="#ffff00"/><rect x="250.5" y="169.5" width="6" height="12" fill="#ffff33"/><rect x="257.5" y="169.5" width="6" height="12" fill="#ffff33"/><rect x="264.5" y="169.5" width="6" height="12" fill="#ffff33"/><rect x="271.5" y="169.5" width="6" height="12" fill="#ffff33"/><rect x="278.5" y="169.5" width="6" height="12" fill="#ffff33"/><rect x="285.5" y="169.5" width="6" height="12" fill="#ffff66"/><rect x="292.5" y="169.5" width="6" height="12" fill="#ffff66"/><rect x="299.5" y="169.5" width="6" height="12" fill="#ffff66"/><rect x="306.5" y="169.5" width="6" height="12" fill="#ffff99"/><rect x="313.5" y="169.5" width="6" height="12" fill="#ffff33"/><rect x="320.5" y="169.5" width="6" height="12" fill="#ffff33"/><rect x="327.5" y="169.5" width="6" height="12" fill="#ffff66"/><rect x="334.5" y="169.5" width="6" height="12" fill="#ffff99"/><rect x="341.5" y="169.5" width="6" height="12" fill="#ffff66"/><rect x="348.5" y="169.5" width="6" height="12" fill="#ffff33"/><rect x="355.5" y="169.5" width="6" height="12" fill="#ffff33"/><rect x="362.5" y="169.5" width="6" height="12" fill="#ffff66"/><rect x="369.5" y="169.5" width="6" height="12" fill="#ffff66"/><rect x="376.5" y="169.5" width="6" height="12" fill="#ffff99"/><rect x="383.5" y="169.5" width="6" height="12" fill="#ffff66"/><rect x="390.5" y="169.5" width="6" height="12" fill="#ffff66"/><rect x="397.5" y="169.5" width="6" height="12" fill="#ffff66"/><rect x="404.5" y="169.5" width="6" height="12" fill="#ffff99"/><rect x="411.5" y="169.5" width="6" height="12" fill="#ffff66"/><rect x="418.5" y="169.5" width="6" height="12" fill="#ffff66"/><rect x="425.5" y="169.5" width="6" height="12" fill="#ffff33"/><rect x="432.5" y="169.5" width="6" height="12" fill="#ffff33"/><rect x="93" y="195" width="335" height="3" fill="#3a3a3a" stroke="none"/><rect x="93.5" y="183.5" width="6" height="12" fill="#ffff33"/><rect x="100.5" y="183.5" width="6" height="12" fill="#ffff33"/><rect x="107.5" y="183.5" width="6" height="12" fill="#ffff66"/><rect x="114.5" y="183.5" width="6" height="12" fill="#ffff33"/><rect x="121.5" y="183.5" width="6" height="12" fill="#ffff66"/><rect x="128.5" y="183.5" width="6" height="12" fill="#ffff33"/><rect x="135.5" y="183.5" width="6" height="12" fill="#ffff33"/><rect x="142.5" y="183.5" width="6" height="12" fill="#ffff66"/><rect x="149.5" y="183.5" width="6" height="12" fill="#ffff33"/><rect x="156.5" y="183.5" width="6" height="12" fill="#ffff33"/><rect x="163.5" y="183.5" width="6" height="12" fill="#ffff33"/><rect x="170.5" y="183.5" width="6" height="12" fill="#ffff00"/><rect x="177.5" y="183.5" width="6" height="12" fill="#ffff33"/><rect x="184.5" y="183.5" width="6" height="12" fill="#ffff00"/><rect x="191.5" y="183.5" width="6" height="12" fill="#ffff33"/><rect x="198.5" y="183.5" width="6" height="12" fill="#ffff33"/><rect x="205.5" y="183.5" width="6" height="12" fill="#ffff00"/><rect x="212.5" y="183.5" width="6" height="12" fill="#ffff33"/><rect x="219.5" y="183.5" width="6" height="12" fill="#ffff00"/><rect x="226.5" y="183.5" width="6" height="12" fill="#ffff33"/><rect x="233.5" y="183.5" width="6" height="12" fill="#ffff00"/><rect x="240.5" y="183.5" width="6" height="12" fill="#ffff33"/><rect x="247.5" y="183.5" width="6" height="12" fill="#ffff33"/><rect x="254.5" y="183.5" width="6" height="12" fill="#ffff00"/><rect x="261.5" y="183.5" width="6" height="12" fill="#ffff33"/><rect x="267.5" y="183.5" width="6" height="12" fill="#ffff33"/><rect x="274.5" y="183.5" width="6" height="12" fill="#ffff66"/><rect x="281.5" y="183.5" width="6" height="12" fill="#ffff33"/><rect x="288.5" y="183.5" width="6" height="12" fill="#ffff33"/><rect x="295.5" y="183.5" width="6" height="12" fill="#ffff33"/><rect x="302.5" y="183.5" width="6" height="12" fill="#ffff33"/><rect x="309.5" y="183.5" width="6" height="12" fill="#ffff33"/><rect x="316.5" y="183.5" width="6" height="12" fill="#ffff33"/><rect x="323.5" y="183.5" width="6" height="12" fill="#ffff66"/><rect x="330.5" y="183.5" width="6" height="12" fill="#ffff66"/><rect x="337.5" y="183.5" width="6" height="12" fill="#ffff66"/><rect x="344.5" y="183.5" width="6" height="12" fill="#ffff33"/><rect x="351.5" y="183.5" width="6" height="12" fill="#ffff66"/><rect x="358.5" y="183.5" width="6" height="12" fill="#ffff66"/><rect x="365.5" y="183.5" width="6" height="12" fill="#ffff99"/><rect x="372.5" y="183.5" width="6" height="12" fill="#ffff66"/><rect x="379.5" y="183.5" width="6" height="12" fill="#ffff99"/><rect x="386.5" y="183.5" width="6" height="12" fill="#ffffcc"/><rect x="393.5" y="183.5" width="6" height="12" fill="#ffff99"/><rect x="400.5" y="183.5" width="6" height="12" fill="#ffff66"/><rect x="407.5" y="183.5" width="6" height="12" fill="#ffff99"/><rect x="414.5" y="183.5" width="6" height="12" fill="#ffff33"/><rect x="421.5" y="183.5" width="6" height="12" fill="#ffff33"/><rect x="103" y="209" width="315" height="3" fill="#3a3a3a" stroke="none"/><rect x="103.5" y="197.5" width="6" height="12" fill="#ffff66"/><rect x="110.5" y="197.5" width="6" height="12" fill="#ffff33"/><rect x="117.5" y="197.5" width="6" height="12" fill="#ffff33"/><rect x="124.5" y="197.5" width="6" height="12" fill="#ffff66"/><rect x="131.5" y="197.5" width="6" height="12" fill="#ffff33"/><rect x="138.5" y="197.5" width="6" height="12" fill="#ffff66"/><rect x="145.5" y="197.5" width="6" height="12" fill="#ffff66"/><rect x="152.5" y="197.5" width="6" height="12" fill="#ffff66"/><rect x="159.5" y="197.5" width="6" height="12" fill="#ffff66"/><rect x="166.5" y="197.5" width="6" height="12" fill="#ffff33"/><rect x="173.5" y="197.5" width="6" height="12" fill="#ffff66"/><rect x="180.5" y="197.5" width="6" height="12" fill="#ffff66"/><rect x="187.5" y="197.5" width="6" height="12" fill="#ffff66"/><rect x="194.5" y="197.5" width="6" height="12" fill="#ffff33"/><rect x="201.5" y="197.5" width="6" height="12" fill="#ffff00"/><rect x="208.5" y="197.5" width="6" height="12" fill="#ffff66"/><rect x="215.5" y="197.5" width="6" height="12" fill="#ffff33"/><rect x="222.5" y="197.5" width="6" height="12" fill="#ffff66"/><rect x="229.5" y="197.5" width="6" height="12" fill="#ffff33"/><rect x="236.5" y="197.5" width="6" height="12" fill="#ffff33"/><rect x="243.5" y="197.5" width="6" height="12" fill="#ffff66"/><rect x="250.5" y="197.5" width="6" height="12" fill="#ffff66"/><rect x="257.5" y="197.5" width="6" height="12" fill="#ffff66"/><rect x="264.5" y="197.5" width="6" height="12" fill="#ffff66"/><rect x="271.5" y="197.5" width="6" height="12" fill="#ffff66"/><rect x="278.5" y="197.5" width="6" height="12" fill="#ffff66"/><rect x="285.5" y="197.5" width="6" height="12" fill="#ffff66"/><rect x="292.5" y="197.5" width="6" height="12" fill="#ffff99"/><rect x="299.5" y="197.5" width="6" height="12" fill="#ffff99"/><rect x="306.5" y="197.5" width="6" height="12" fill="#ffff66"/><rect x="313.5" y="197.5" width="6" height="12" fill="#ffff99"/><rect x="320.5" y="197.5" width="6" height="12" fill="#ffff66"/><rect x="327.5" y="197.5" width="6" height="12" fill="#ffff66"/><rect x="334.5" y="197.5" width="6" height="12" fill="#ffff99"/><rect x="341.5" y="197.5" width="6" height="12" fill="#ffff99"/><rect x="348.5" y="197.5" width="6" height="12" fill="#ffff99"/><rect x="355.5" y="197.5" width="6" height="12" fill="#ffff99"/><rect x="362.5" y="197.5" width="6" height="12" fill="#ffff66"/><rect x="369.5" y="197.5" width="6" height="12" fill="#ffff99"/><rect x="376.5" y="197.5" width="6" height="12" fill="#ffffcc"/><rect x="383.5" y="197.5" width="6" height="12" fill="#ffff99"/><rect x="390.5" y="197.5" width="6" height="12" fill="#ffff99"/><rect x="397.5" y="197.5" width="6" height="12" fill="#ffff99"/><rect x="404.5" y="197.5" width="6" height="12" fill="#ffff66"/><rect x="411.5" y="197.5" width="6" height="12" fill="#ffff33"/><rect x="114" y="223" width="293" height="3" fill="#3a3a3a" stroke="none"/><rect x="114.5" y="211.5" width="6" height="12" fill="#ffff99"/><rect x="121.5" y="211.5" width="6" height="12" fill="#ffff99"/><rect x="128.5" y="211.5" width="6" height="12" fill="#ffff99"/><rect x="135.5" y="211.5" width="6" height="12" fill="#ffff33"/><rect x="142.5" y="211.5" width="6" height="12" fill="#ffff66"/><rect x="149.5" y="211.5" width="6" height="12" fill="#ffff33"/><rect x="156.5" y="211.5" width="6" height="12" fill="#ffff66"/><rect x="163.5" y="211.5" width="6" height="12" fill="#ffff66"/><rect x="170.5" y="211.5" width="6" height="12" fill="#ffff33"/><rect x="177.5" y="211.5" width="6" height="12" fill="#ffff66"/><rect x="184.5" y="211.5" width="6" height="12" fill="#ffff66"/><rect x="191.5" y="211.5" width="6" height="12" fill="#ffff33"/><rect x="198.5" y="211.5" width="6" height="12" fill="#ffff66"/><rect x="205.5" y="211.5" width="6" height="12" fill="#ffff66"/><rect x="212.5" y="211.5" width="6" height="12" fill="#ffff33"/><rect x="219.5" y="211.5" width="6" height="12" fill="#ffff66"/><rect x="226.5" y="211.5" width="6" height="12" fill="#ffff33"/><rect x="233.5" y="211.5" width="6" height="12" fill="#ffff33"/><rect x="240.5" y="211.5" width="6" height="12" fill="#ffff66"/><rect x="247.5" y="211.5" width="6" height="12" fill="#ffff66"/><rect x="254.5" y="211.5" width="6" height="12" fill="#ffff33"/><rect x="261.5" y="211.5" width="6" height="12" fill="#ffff66"/><rect x="267.5" y="211.5" width="6" height="12" fill="#ffff66"/><rect x="274.5" y="211.5" width="6" height="12" fill="#ffff99"/><rect x="281.5" y="211.5" width="6" height="12" fill="#ffff99"/><rect x="288.5" y="211.5" width="6" height="12" fill="#ffff66"/><rect x="295.5" y="211.5" width="6" height="12" fill="#ffff66"/><rect x="302.5" y="211.5" width="6" height="12" fill="#ffff66"/><rect x="309.5" y="211.5" width="6" height="12" fill="#ffff99"/><rect x="316.5" y="211.5" width="6" height="12" fill="#ffff99"/><rect x="323.5" y="211.5" width="6" height="12" fill="#ffff99"/><rect x="330.5" y="211.5" width="6" height="12" fill="#ffff99"/><rect x="337.5" y="211.5" width="6" height="12" fill="#ffffcc"/><rect x="344.5" y="211.5" width="6" height="12" fill="#ffff99"/><rect x="351.5" y="211.5" width="6" height="12" fill="#ffff66"/><rect x="358.5" y="211.5" width="6" height="12" fill="#ffffcc"/><rect x="365.5" y="211.5" width="6" height="12" fill="#ffff99"/><rect x="372.5" y="211.5" width="6" height="12" fill="#ffffcc"/><rect x="379.5" y="211.5" width="6" height="12" fill="#ffff99"/><rect x="386.5" y="211.5" width="6" height="12" fill="#ffff66"/><rect x="393.5" y="211.5" width="6" height="12" fill="#ffff99"/><rect x="400.5" y="211.5" width="6" height="12" fill="#ffff66"/><rect x="124" y="237" width="273" height="2" fill="#3a3a3a" stroke="none"/><rect x="124.5" y="225.5" width="6" height="12" fill="#ffff99"/><rect x="131.5" y="225.5" width="6" height="12" fill="#ffff66"/><rect x="138.5" y="225.5" width="6" height="12" fill="#ffff99"/><rect x="145.5" y="225.5" width="6" height="12" fill="#ffff66"/><rect x="152.5" y="225.5" width="6" height="12" fill="#ffff99"/><rect x="159.5" y="225.5" width="6" height="12" fill="#ffff66"/><rect x="166.5" y="225.5" width="6" height="12" fill="#ffff66"/><rect x="173.5" y="225.5" width="6" height="12" fill="#ffff33"/><rect x="180.5" y="225.5" width="6" height="12" fill="#ffff33"/><rect x="187.5" y="225.5" width="6" height="12" fill="#ffff66"/><rect x="194.5" y="225.5" width="6" height="12" fill="#ffff66"/><rect x="201.5" y="225.5" width="6" height="12" fill="#ffff33"/><rect x="208.5" y="225.5" width="6" height="12" fill="#ffff66"/><rect x="215.5" y="225.5" width="6" height="12" fill="#ffff33"/><rect x="222.5" y="225.5" width="6" height="12" fill="#ffff33"/><rect x="229.5" y="225.5" width="6" height="12" fill="#ffff33"/><rect x="236.5" y="225.5" width="6" height="12" fill="#ffff66"/><rect x="243.5" y="225.5" width="6" height="12" fill="#ffff33"/><rect x="250.5" y="225.5" width="6" height="12" fill="#ffff66"/><rect x="257.5" y="225.5" width="6" height="12" fill="#ffff66"/><rect x="264.5" y="225.5" width="6" height="12" fill="#ffff66"/><rect x="271.5" y="225.5" width="6" height="12" fill="#ffff99"/><rect x="278.5" y="225.5" width="6" height="12" fill="#ffff99"/><rect x="285.5" y="225.5" width="6" height="12" fill="#ffff66"/><rect x="292.5" y="225.5" width="6" height="12" fill="#ffff66"/><rect x="299.5" y="225.5" width="6" height="12" fill="#ffff66"/><rect x="306.5" y="225.5" width="6" height="12" fill="#ffff99"/><rect x="313.5" y="225.5" width="6" height="12" fill="#ffff99"/><rect x="320.5" y="225.5" width="6" height="12" fill="#ffff99"/><rect x="327.5" y="225.5" width="6" height="12" fill="#ffff99"/><rect x="334.5" y="225.5" width="6" height="12" fill="#ffffcc"/><rect x="341.5" y="225.5" width="6" height="12" fill="#ffffcc"/><rect x="348.5" y="225.5" width="6" height="12" fill="#ffff99"/><rect x="355.5" y="225.5" width="6" height="12" fill="#ffffcc"/><rect x="362.5" y="225.5" width="6" height="12" fill="#ffff99"/><rect x="369.5" y="225.5" width="6" height="12" fill="#ffffcc"/><rect x="376.5" y="225.5" width="6" height="12" fill="#ffffcc"/><rect x="383.5" y="225.5" width="6" height="12" fill="#ffff99"/><rect x="390.5" y="225.5" width="6" height="12" fill="#ffffcc"/><rect x="135" y="250" width="251" height="3" fill="#3a3a3a" stroke="none"/><rect x="135.5" y="238.5" width="6" height="12" fill="#ffffcc"/><rect x="142.5" y="238.5" width="6" height="12" fill="#ffff66"/><rect x="149.5" y="238.5" width="6" height="12" fill="#ffff99"/><rect x="156.5" y="238.5" width="6" height="12" fill="#ffff99"/><rect x="163.5" y="238.5" width="6" height="12" fill="#ffff99"/><rect x="170.5" y="238.5" width="6" height="12" fill="#ffff99"/><rect x="177.5" y="238.5" width="6" height="12" fill="#ffff99"/><rect x="184.5" y="238.5" width="6" height="12" fill="#ffff33"/><rect x="191.5" y="238.5" width="6" height="12" fill="#ffff66"/><rect x="198.5" y="238.5" width="6" height="12" fill="#ffff33"/><rect x="205.5" y="238.5" width="6" height="12" fill="#ffff66"/><rect x="212.5" y="238.5" width="6" height="12" fill="#ffff66"/><rect x="219.5" y="238.5" width="6" height="12" fill="#ffff66"/><rect x="226.5" y="238.5" width="6" height="12" fill="#ffff33"/><rect x="233.5" y="238.5" width="6" height="12" fill="#ffff66"/><rect x="240.5" y="238.5" width="6" height="12" fill="#ffff66"/><rect x="247.5" y="238.5" width="6" height="12" fill="#ffff33"/><rect x="254.5" y="238.5" width="6" height="12" fill="#ffff66"/><rect x="261.5" y="238.5" width="6" height="12" fill="#ffff66"/><rect x="267.5" y="238.5" width="6" height="12" fill="#ffff99"/><rect x="274.5" y="238.5" width="6" height="12" fill="#ffff66"/><rect x="281.5" y="238.5" width="6" height="12" fill="#ffff99"/><rect x="288.5" y="238.5" width="6" height="12" fill="#ffff99"/><rect x="295.5" y="238.5" width="6" height="12" fill="#ffff66"/><rect x="302.5" y="238.5" width="6" height="12" fill="#ffff66"/><rect x="309.5" y="238.5" width="6" height="12" fill="#ffff99"/><rect x="316.5" y="238.5" width="6" height="12" fill="#ffff33"/><rect x="323.5" y="238.5" width="6" height="12" fill="#ffffcc"/><rect x="330.5" y="238.5" width="6" height="12" fill="#ffffcc"/><rect x="337.5" y="238.5" width="6" height="12" fill="#ffff99"/><rect x="344.5" y="238.5" width="6" height="12" fill="#ffffcc"/><rect x="351.5" y="238.5" width="6" height="12" fill="#ffffcc"/><rect x="358.5" y="238.5" width="6" height="12" fill="#ffff99"/><rect x="365.5" y="238.5" width="6" height="12" fill="#ffffcc"/><rect x="372.5" y="238.5" width="6" height="12" fill="#ffffcc"/><rect x="379.5" y="238.5" width="6" height="12" fill="#ffff99"/><rect x="145" y="264" width="231" height="3" fill="#3a3a3a" stroke="none"/><rect x="145.5" y="252.5" width="6" height="12" fill="#ffffcc"/><rect x="152.5" y="252.5" width="6" height="12" fill="#ffffcc"/><rect x="159.5" y="252.5" width="6" height="12" fill="#ffff66"/><rect x="166.5" y="252.5" width="6" height="12" fill="#ffff99"/><rect x="173.5" y="252.5" width="6" height="12" fill="#ffff99"/><rect x="180.5" y="252.5" width="6" height="12" fill="#ffff99"/><rect x="187.5" y="252.5" width="6" height="12" fill="#ffff66"/><rect x="194.5" y="252.5" width="6" height="12" fill="#ffff99"/><rect x="201.5" y="252.5" width="6" height="12" fill="#ffff99"/><rect x="208.5" y="252.5" width="6" height="12" fill="#ffff33"/><rect x="215.5" y="252.5" width="6" height="12" fill="#ffff66"/><rect x="222.5" y="252.5" width="6" height="12" fill="#ffff66"/><rect x="229.5" y="252.5" width="6" height="12" fill="#ffff33"/><rect x="236.5" y="252.5" width="6" height="12" fill="#ffff66"/><rect x="243.5" y="252.5" width="6" height="12" fill="#ffff66"/><rect x="250.5" y="252.5" width="6" height="12" fill="#ffff66"/><rect x="257.5" y="252.5" width="6" height="12" fill="#ffff66"/><rect x="264.5" y="252.5" width="6" height="12" fill="#ffff99"/><rect x="271.5" y="252.5" width="6" height="12" fill="#ffff99"/><rect x="278.5" y="252.5" width="6" height="12" fill="#ffff99"/><rect x="285.5" y="252.5" width="6" height="12" fill="#ffff99"/><rect x="292.5" y="252.5" width="6" height="12" fill="#ffff99"/><rect x="299.5" y="252.5" width="6" height="12" fill="#ffff99"/><rect x="306.5" y="252.5" width="6" height="12" fill="#ffff66"/><rect x="313.5" y="252.5" width="6" height="12" fill="#ffffcc"/><rect x="320.5" y="252.5" width="6" height="12" fill="#ffffcc"/><rect x="327.5" y="252.5" width="6" height="12" fill="#ffff99"/><rect x="334.5" y="252.5" width="6" height="12" fill="#ffffcc"/><rect x="341.5" y="252.5" width="6" height="12" fill="#ffffcc"/><rect x="348.5" y="252.5" width="6" height="12" fill="#ffff99"/><rect x="355.5" y="252.5" width="6" height="12" fill="#ffffcc"/><rect x="362.5" y="252.5" width="6" height="12" fill="#ffffcc"/><rect x="369.5" y="252.5" width="6" height="12" fill="#ffffcc"/><rect x="156" y="278" width="209" height="3" fill="#3a3a3a" stroke="none"/><rect x="156.5" y="266.5" width="6" height="12" fill="#ffffcc"/><rect x="163.5" y="266.5" width="6" height="12" fill="#ffffcc"/><rect x="170.5" y="266.5" width="6" height="12" fill="#ffff66"/><rect x="177.5" y="266.5" width="6" height="12" fill="#ffff99"/><rect x="184.5" y="266.5" width="6" height="12" fill="#ffff66"/><rect x="191.5" y="266.5" width="6" height="12" fill="#ffff99"/><rect x="198.5" y="266.5" width="6" height="12" fill="#ffff99"/><rect x="205.5" y="266.5" width="6" height="12" fill="#ffff66"/><rect x="212.5" y="266.5" width="6" height="12" fill="#ffff99"/><rect x="219.5" y="266.5" width="6" height="12" fill="#ffff66"/><rect x="226.5" y="266.5" width="6" height="12" fill="#ffff66"/><rect x="233.5" y="266.5" width="6" height="12" fill="#ffff99"/><rect x="240.5" y="266.5" width="6" height="12" fill="#ffff66"/><rect x="247.5" y="266.5" width="6" height="12" fill="#ffff66"/><rect x="254.5" y="266.5" width="6" height="12" fill="#ffff66"/><rect x="261.5" y="266.5" width="6" height="12" fill="#ffff66"/><rect x="267.5" y="266.5" width="6" height="12" fill="#ffff99"/><rect x="274.5" y="266.5" width="6" height="12" fill="#ffff99"/><rect x="281.5" y="266.5" width="6" height="12" fill="#ffff99"/><rect x="288.5" y="266.5" width="6" height="12" fill="#ffff99"/><rect x="295.5" y="266.5" width="6" height="12" fill="#ffff99"/><rect x="302.5" y="266.5" width="6" height="12" fill="#ffff99"/><rect x="309.5" y="266.5" width="6" height="12" fill="#ffffcc"/><rect x="316.5" y="266.5" width="6" height="12" fill="#ffffcc"/><rect x="323.5" y="266.5" width="6" height="12" fill="#ffff99"/><rect x="330.5" y="266.5" width="6" height="12" fill="#ffffcc"/><rect x="337.5" y="266.5" width="6" height="12" fill="#ffffcc"/><rect x="344.5" y="266.5" width="6" height="12" fill="#ffff99"/><rect x="351.5" y="266.5" width="6" height="12" fill="#ffffcc"/><rect x="358.5" y="266.5" width="6" height="12" fill="#ffffcc"/><rect x="166" y="292" width="189" height="3" fill="#3a3a3a" stroke="none"/><rect x="166.5" y="280.5" width="6" height="12" fill="#ffffcc"/><rect x="173.5" y="280.5" width="6" height="12" fill="#ffffcc"/><rect x="180.5" y="280.5" width="6" height="12" fill="#ffffcc"/><rect x="187.5" y="280.5" width="6" height="12" fill="#ffff99"/><rect x="194.5" y="280.5" width="6" height="12" fill="#ffff99"/><rect x="201.5" y="280.5" width="6" height="12" fill="#ffff99"/><rect x="208.5" y="280.5" width="6" height="12" fill="#ffff99"/><rect x="215.5" y="280.5" width="6" height="12" fill="#ffff99"/><rect x="222.5" y="280.5" width="6" height="12" fill="#ffffcc"/><rect x="229.5" y="280.5" width="6" height="12" fill="#ffff99"/><rect x="236.5" y="280.5" width="6" height="12" fill="#ffffcc"/><rect x="243.5" y="280.5" width="6" height="12" fill="#ffff66"/><rect x="250.5" y="280.5" width="6" height="12" fill="#ffff99"/><rect x="257.5" y="280.5" width="6" height="12" fill="#ffff99"/><rect x="264.5" y="280.5" width="6" height="12" fill="#ffff99"/><rect x="271.5" y="280.5" width="6" height="12" fill="#ffff99"/><rect x="278.5" y="280.5" width="6" height="12" fill="#ffff99"/><rect x="285.5" y="280.5" width="6" height="12" fill="#ffff99"/><rect x="292.5" y="280.5" width="6" height="12" fill="#ffff99"/><rect x="299.5" y="280.5" width="6" height="12" fill="#ffff99"/><rect x="306.5" y="280.5" width="6" height="12" fill="#ffffcc"/><rect x="313.5" y="280.5" width="6" height="12" fill="#ffff99"/><rect x="320.5" y="280.5" width="6" height="12" fill="#ffffcc"/><rect x="327.5" y="280.5" width="6" height="12" fill="#ffffcc"/><rect x="334.5" y="280.5" width="6" height="12" fill="#ffffcc"/><rect x="341.5" y="280.5" width="6" height="12" fill="#ffffcc"/><rect x="348.5" y="280.5" width="6" height="12" fill="#ffffcc"/><rect x="177" y="306" width="167" height="3" fill="#3a3a3a" stroke="none"/><rect x="177.5" y="294.5" width="6" height="12" fill="#ffffcc"/><rect x="184.5" y="294.5" width="6" height="12" fill="#ffffcc"/><rect x="191.5" y="294.5" width="6" height="12" fill="#ffffcc"/><rect x="198.5" y="294.5" width="6" height="12" fill="#ffff99"/><rect x="205.5" y="294.5" width="6" height="12" fill="#ffff99"/><rect x="212.5" y="294.5" width="6" height="12" fill="#ffff99"/><rect x="219.5" y="294.5" width="6" height="12" fill="#ffffcc"/><rect x="226.5" y="294.5" width="6" height="12" fill="#ffff99"/><rect x="233.5" y="294.5" width="6" height="12" fill="#ffff99"/><rect x="240.5" y="294.5" width="6" height="12" fill="#ffffcc"/><rect x="247.5" y="294.5" width="6" height="12" fill="#ffff99"/><rect x="254.5" y="294.5" width="6" height="12" fill="#ffff99"/><rect x="261.5" y="294.5" width="6" height="12" fill="#ffff99"/><rect x="267.5" y="294.5" width="6" height="12" fill="#ffff99"/><rect x="274.5" y="294.5" width="6" height="12" fill="#ffff99"/><rect x="281.5" y="294.5" width="6" height="12" fill="#ffff99"/><rect x="288.5" y="294.5" width="6" height="12" fill="#ffff99"/><rect x="295.5" y="294.5" width="6" height="12" fill="#ffff99"/><rect x="302.5" y="294.5" width="6" height="12" fill="#ffffcc"/><rect x="309.5" y="294.5" width="6" height="12" fill="#ffffcc"/><rect x="316.5" y="294.5" width="6" height="12" fill="#ffffcc"/><rect x="323.5" y="294.5" width="6" height="12" fill="#ffffcc"/><rect x="330.5" y="294.5" width="6" height="12" fill="#ffffcc"/><rect x="337.5" y="294.5" width="6" height="12" fill="#ffffcc"/><rect x="187" y="320" width="147" height="3" fill="#3a3a3a" stroke="none"/><rect x="187.5" y="308.5" width="6" height="12" fill="#ffffcc"/><rect x="194.5" y="308.5" width="6" height="12" fill="#ffffcc"/><rect x="201.5" y="308.5" width="6" height="12" fill="#ffff99"/><rect x="208.5" y="308.5" width="6" height="12" fill="#ffff99"/><rect x="215.5" y="308.5" width="6" height="12" fill="#ffff99"/><rect x="222.5" y="308.5" width="6" height="12" fill="#ffff99"/><rect x="229.5" y="308.5" width="6" height="12" fill="#ffff99"/><rect x="236.5" y="308.5" width="6" height="12" fill="#ffff99"/><rect x="243.5" y="308.5" width="6" height="12" fill="#ffff99"/><rect x="250.5" y="308.5" width="6" height="12" fill="#ffff99"/><rect x="257.5" y="308.5" width="6" height="12" fill="#ffff99"/><rect x="264.5" y="308.5" width="6" height="12" fill="#ffff99"/><rect x="271.5" y="308.5" width="6" height="12" fill="#ffff99"/><rect x="278.5" y="308.5" width="6" height="12" fill="#ffff99"/><rect x="285.5" y="308.5" width="6" height="12" fill="#ffff99"/><rect x="292.5" y="308.5" width="6" height="12" fill="#ffff99"/><rect x="299.5" y="308.5" width="6" height="12" fill="#ffff99"/><rect x="306.5" y="308.5" width="6" height="12" fill="#ffff99"/><rect x="313.5" y="308.5" width="6" height="12" fill="#ffff99"/><rect x="320.5" y="308.5" width="6" height="12" fill="#ffffcc"/><rect x="327.5" y="308.5" width="6" height="12" fill="#ffffcc"/><rect x="198" y="334" width="125" height="3" fill="#3a3a3a" stroke="none"/><rect x="198.5" y="322.5" width="6" height="12" fill="#ffffcc"/><rect x="205.5" y="322.5" width="6" height="12" fill="#ffff99"/><rect x="212.5" y="322.5" width="6" height="12" fill="#ffff99"/><rect x="219.5" y="322.5" width="6" height="12" fill="#ffff99"/><rect x="226.5" y="322.5" width="6" height="12" fill="#ffff99"/><rect x="233.5" y="322.5" width="6" height="12" fill="#ffff99"/><rect x="240.5" y="322.5" width="6" height="12" fill="#ffff99"/><rect x="247.5" y="322.5" width="6" height="12" fill="#ffff99"/><rect x="254.5" y="322.5" width="6" height="12" fill="#ffff99"/><rect x="261.5" y="322.5" width="6" height="12" fill="#ffff99"/><rect x="268.5" y="322.5" width="6" height="12" fill="#ffff99"/><rect x="274.5" y="322.5" width="6" height="12" fill="#ffff99"/><rect x="281.5" y="322.5" width="6" height="12" fill="#ffff99"/><rect x="288.5" y="322.5" width="6" height="12" fill="#ffff99"/><rect x="295.5" y="322.5" width="6" height="12" fill="#ffff99"/><rect x="302.5" y="322.5" width="6" height="12" fill="#ffff99"/><rect x="309.5" y="322.5" width="6" height="12" fill="#ffffcc"/><rect x="316.5" y="322.5" width="6" height="12" fill="#ffffcc"/><rect x="208" y="348" width="105" height="2" fill="#3a3a3a" stroke="none"/><rect x="208.5" y="336.5" width="6" height="12" fill="#ffff99"/><rect x="215.5" y="336.5" width="6" height="12" fill="#ffff99"/><rect x="222.5" y="336.5" width="6" height="12" fill="#ffff99"/><rect x="229.5" y="336.5" width="6" height="12" fill="#ffff99"/><rect x="236.5" y="336.5" width="6" height="12" fill="#ffff99"/><rect x="243.5" y="336.5" width="6" height="12" fill="#ffff99"/><rect x="250.5" y="336.5" width="6" height="12" fill="#ffff99"/><rect x="257.5" y="336.5" width="6" height="12" fill="#ffff99"/><rect x="264.5" y="336.5" width="6" height="12" fill="#ffff99"/><rect x="271.5" y="336.5" width="6" height="12" fill="#ffff99"/><rect x="278.5" y="336.5" width="6" height="12" fill="#ffff99"/><rect x="285.5" y="336.5" width="6" height="12" fill="#ffff99"/><rect x="292.5" y="336.5" width="6" height="12" fill="#ffff99"/><rect x="299.5" y="336.5" width="6" height="12" fill="#ffff99"/><rect x="306.5" y="336.5" width="6" height="12" fill="#ffffcc"/><rect x="219" y="361" width="83" height="3" fill="#3a3a3a" stroke="none"/><rect x="219.5" y="349.5" width="6" height="12" fill="#ffffcc"/><rect x="226.5" y="349.5" width="6" height="12" fill="#ffff99"/><rect x="233.5" y="349.5" width="6" height="12" fill="#ffff99"/><rect x="240.5" y="349.5" width="6" height="12" fill="#ffff99"/><rect x="247.5" y="349.5" width="6" height="12" fill="#ffff99"/><rect x="254.5" y="349.5" width="6" height="12" fill="#ffffcc"/><rect x="261.5" y="349.5" width="6" height="12" fill="#ffffcc"/><rect x="268.5" y="349.5" width="6" height="12" fill="#ffff66"/><rect x="274.5" y="349.5" width="6" height="12" fill="#ffff99"/><rect x="281.5" y="349.5" width="6" height="12" fill="#ffffcc"/><rect x="288.5" y="349.5" width="6" height="12" fill="#ffffcc"/><rect x="295.5" y="349.5" width="6" height="12" fill="#ffffcc"/><rect x="229" y="375" width="63" height="3" fill="#3a3a3a" stroke="none"/><rect x="229.5" y="363.5" width="6" height="12" fill="#ffffcc"/><rect x="236.5" y="363.5" width="6" height="12" fill="#ffffcc"/><rect x="243.5" y="363.5" width="6" height="12" fill="#ffffcc"/><rect x="250.5" y="363.5" width="6" height="12" fill="#ffffcc"/><rect x="257.5" y="363.5" width="6" height="12" fill="#ffff99"/><rect x="264.5" y="363.5" width="6" height="12" fill="#ffff99"/><rect x="271.5" y="363.5" width="6" height="12" fill="#ffff99"/><rect x="278.5" y="363.5" width="6" height="12" fill="#ffff99"/><rect x="285.5" y="363.5" width="6" height="12" fill="#ffffcc"/><rect x="240" y="389" width="41" height="3" fill="#3a3a3a" stroke="none"/><rect x="240.5" y="377.5" width="6" height="12" fill="#ffffcc"/><rect x="247.5" y="377.5" width="6" height="12" fill="#ffffcc"/><rect x="254.5" y="377.5" width="6" height="12" fill="#ffff99"/><rect x="261.5" y="377.5" width="6" height="12" fill="#ffff99"/><rect x="268.5" y="377.5" width="6" height="12" fill="#ffff99"/><rect x="274.5" y="377.5" width="6" height="12" fill="#ffff99"/><rect x="250.5" y="391.5" width="6" height="12" fill="#ffffcc"/><rect x="257.5" y="391.5" width="6" height="12" fill="#ffff99"/><rect x="264.5" y="391.5" width="6" height="12" fill="#ffffcc"/></g></svg><div class="gb" style="left:9px;top:409px;width:502px;height:54px"></div><div class="a" style="left:15px;top:404px;width:90px;height:10px;background:#ece9d8"></div><div class="t" style="left:15.89px;top:405px;font-size:11px;color:#000;transform:scaleX(0.900);">Resistivity (Ohm*m)</div><svg class="a" style="left:0;top:0" width="631" height="581"><g stroke="#000" shape-rendering="crispEdges"><rect x="11.5" y="418.5" width="30" height="16" fill="#ff0000"/><rect x="41.5" y="418.5" width="31" height="16" fill="#ff4000"/><rect x="72.5" y="418.5" width="31" height="16" fill="#ff7000"/><rect x="103.5" y="418.5" width="30" height="16" fill="#ffa000"/><rect x="133.5" y="418.5" width="31" height="16" fill="#ffc800"/><rect x="164.5" y="418.5" width="31" height="16" fill="#ffff00"/><rect x="195.5" y="418.5" width="30" height="16" fill="#ffff33"/><rect x="225.5" y="418.5" width="31" height="16" fill="#ffff66"/><rect x="256.5" y="418.5" width="31" height="16" fill="#ffff99"/><rect x="287.5" y="418.5" width="30" height="16" fill="#ffffcc"/><rect x="317.5" y="418.5" width="31" height="16" fill="#ffffff"/><rect x="348.5" y="418.5" width="31" height="16" fill="#ccccff"/><rect x="379.5" y="418.5" width="30" height="16" fill="#9999ff"/><rect x="409.5" y="418.5" width="31" height="16" fill="#6666ff"/><rect x="440.5" y="418.5" width="31" height="16" fill="#3333ff"/><rect x="471.5" y="418.5" width="31" height="16" fill="#0000ff"/></g></svg><div class="edit" style="left:13px;top:443px;width:54px;height:18px;border-color:#808080 #fff #fff #808080;box-shadow:inset 1px 1px 0 #404040"></div><div class="t" style="left:21.01px;top:446px;font-size:11px;color:#000;transform:scaleX(0.974);">83.85</div><div class="edit" style="left:454px;top:443px;width:53px;height:18px;border-color:#808080 #fff #fff #808080;box-shadow:inset 1px 1px 0 #404040"></div><div class="t" style="left:460.32px;top:446px;font-size:11px;color:#000;transform:scaleX(0.924);">459.65</div><div class="a" style="left:70px;top:444px;width:12px;height:12px;background:#fff;border:1px solid;border-color:#808080 #fff #fff #808080;box-shadow:inset 1px 1px 0 #404040"></div><svg class="a" style="left:70px;top:444px" width="12" height="12"><path d="M2.8 5.5 L5 8.2 L9.5 3.2" stroke="#000" stroke-width="2" fill="none"/></svg><div class="t" style="left:87.22px;top:445px;font-size:11px;color:#000;transform:scaleX(0.951);">auto</div><div class="a" style="left:119px;top:444px;width:12px;height:12px;background:#fff;border:1px solid;border-color:#808080 #fff #fff #808080;box-shadow:inset 1px 1px 0 #404040"></div><div class="t" style="left:137.04px;top:445px;font-size:11px;color:#000;transform:scaleX(0.947);">log</div><div class="a" style="left:222px;top:439px;width:78px;height:21px;border:1px solid #000;background:#f2f1ea;box-shadow:inset 1px 1px 0 #fff, inset -1px -1px 0 #808080"></div><div class="a" style="left:225px;top:442px;width:72px;height:15px;border:1px dotted #000"></div><div class="t" style="left:243.93px;top:445px;font-size:11px;color:#000;transform:scaleX(0.968);">Update</div><div class="a" style="left:4px;top:468px;width:512px;height:1px;background:#fff"></div><div class="a" style="left:4px;top:468px;width:1px;height:107px;background:#fff"></div><div class="a" style="left:5px;top:472px;width:511px;height:1px;background:#aca899"></div><div class="a" style="left:5px;top:473px;width:511px;height:1px;background:#fff"></div><div class="a" style="left:6px;top:476px;width:510px;height:99px;background:#fff;border:1px solid;border-color:#808080 #fff #fff #808080;box-shadow:inset 1px 1px 0 #404040"></div><div class="a" style="left:7px;top:477px;width:490px;height:36px;background:#ece9d8"></div><div class="a" style="left:7px;top:513px;width:29px;height:36px;background:#ece9d8"></div><div class="a" style="left:36px;top:532px;width:461px;height:17px;background:#316ac5"></div><div class="a" style="left:7px;top:477px;width:490px;height:72px;overflow:hidden"><div class="a" style="left:-7px;top:-477px;width:631px;height:581px"><div class="t" style="left:10.00px;top:482px;font-size:11px;color:#000;">#</div><div class="t" style="left:39.00px;top:482px;font-size:11px;color:#000;">A</div><div class="t" style="left:63.10px;top:482px;font-size:11px;color:#000;">B</div><div class="t" style="left:88.10px;top:482px;font-size:11px;color:#000;">M</div><div class="t" style="left:113.10px;top:482px;font-size:11px;color:#000;">N</div><div class="t" style="left:138.00px;top:482px;font-size:11px;color:#000;">I</div><div class="t" style="left:187.20px;top:482px;font-size:11px;color:#000;">U</div><div class="t" style="left:236.50px;top:482px;font-size:11px;color:#000;">dU</div><div class="t" style="left:285.20px;top:482px;font-size:11px;color:#000;">U90</div><div class="t" style="left:333.50px;top:482px;font-size:11px;color:#000;">dU90</div><div class="t" style="left:382.30px;top:482px;font-size:11px;color:#000;">rho</div><div class="t" style="left:431.30px;top:482px;font-size:11px;color:#000;">phi</div><div class="t" style="left:480.90px;top:482px;font-size:11px;color:#000;">f</div><div class="t" style="left:138.30px;top:499px;font-size:11px;color:#000;">mA</div><div class="t" style="left:187.30px;top:499px;font-size:11px;color:#000;">mV</div><div class="t" style="left:236.60px;top:499px;font-size:11px;color:#000;">%</div><div class="t" style="left:285.30px;top:499px;font-size:11px;color:#000;">mV</div><div class="t" style="left:333.60px;top:499px;font-size:11px;color:#000;">%</div><div class="t" style="left:382.50px;top:499px;font-size:11px;color:#000;">Ohmm</div><div class="t" style="left:431.30px;top:499px;font-size:11px;color:#000;">mrad</div><div class="t" style="left:480.10px;top:499px;font-size:11px;color:#000;">Hz</div><div class="t" style="left:12.81px;top:518px;font-size:11px;color:#000;transform:scaleX(0.988);">899</div><div class="t" style="left:44.34px;top:518px;font-size:11px;color:#000;transform:scaleX(1.118);">2</div><div class="t" style="left:67.09px;top:518px;font-size:11px;color:#000;transform:scaleX(1.009);">74</div><div class="t" style="left:91.89px;top:518px;font-size:11px;color:#000;transform:scaleX(1.018);">26</div><div class="t" style="left:116.80px;top:518px;font-size:11px;color:#000;">50</div><div class="t" style="left:138.03px;top:518px;font-size:11px;color:#000;transform:scaleX(0.958);">15.0000</div><div class="t" style="left:189.39px;top:518px;font-size:11px;color:#000;transform:scaleX(1.016);">14.11150</div><div class="t" style="left:242.40px;top:518px;font-size:11px;color:#000;">0.04</div><div class="t" style="left:291.63px;top:518px;font-size:11px;color:#000;transform:scaleX(0.936);">0.02885</div><div class="t" style="left:340.05px;top:518px;font-size:11px;color:#000;transform:scaleX(0.870);">36.4</div><div class="t" style="left:385.73px;top:518px;font-size:11px;color:#000;transform:scaleX(0.941);">283.729</div><div class="t" style="left:441.33px;top:518px;font-size:11px;color:#000;transform:scaleX(0.932);">2.04</div><div class="t" style="left:483.10px;top:518px;font-size:11px;color:#000;">4.1</div><div class="t" style="left:12.81px;top:536px;font-size:11px;color:#000;transform:scaleX(0.983);">900</div><div class="t" style="left:44.46px;top:536px;font-size:11px;color:#fff;transform:scaleX(1.096);">3</div><div class="t" style="left:67.09px;top:536px;font-size:11px;color:#fff;transform:scaleX(1.018);">75</div><div class="t" style="left:91.89px;top:536px;font-size:11px;color:#fff;transform:scaleX(1.018);">27</div><div class="t" style="left:116.80px;top:536px;font-size:11px;color:#fff;transform:scaleX(1.009);">51</div><div class="t" style="left:138.03px;top:536px;font-size:11px;color:#fff;transform:scaleX(0.958);">15.0000</div><div class="t" style="left:189.42px;top:536px;font-size:11px;color:#fff;transform:scaleX(0.978);">14.15600</div><div class="t" style="left:242.40px;top:536px;font-size:11px;color:#fff;">0.04</div><div class="t" style="left:291.63px;top:536px;font-size:11px;color:#fff;transform:scaleX(0.936);">0.04840</div><div class="t" style="left:340.05px;top:536px;font-size:11px;color:#fff;transform:scaleX(0.878);">39.6</div><div class="t" style="left:385.73px;top:536px;font-size:11px;color:#fff;transform:scaleX(0.941);">284.623</div><div class="t" style="left:441.43px;top:536px;font-size:11px;color:#fff;transform:scaleX(0.937);">3.42</div><div class="t" style="left:483.10px;top:536px;font-size:11px;color:#fff;">4.1</div></div></div><svg class="a" style="left:0;top:0" width="631" height="581"><g stroke="#000" shape-rendering="crispEdges"><line x1="36.5" y1="477" x2="36.5" y2="513"/><line x1="61.5" y1="477" x2="61.5" y2="513"/><line x1="86.5" y1="477" x2="86.5" y2="513"/><line x1="111.5" y1="477" x2="111.5" y2="513"/><line x1="136.5" y1="477" x2="136.5" y2="513"/><line x1="185.5" y1="477" x2="185.5" y2="513"/><line x1="234.5" y1="477" x2="234.5" y2="513"/><line x1="283.5" y1="477" x2="283.5" y2="513"/><line x1="331.5" y1="477" x2="331.5" y2="513"/><line x1="380.5" y1="477" x2="380.5" y2="513"/><line x1="429.5" y1="477" x2="429.5" y2="513"/><line x1="478.5" y1="477" x2="478.5" y2="513"/><line x1="36.5" y1="513" x2="36.5" y2="550"/><line x1="7" y1="495.5" x2="497" y2="495.5"/><line x1="7" y1="513.5" x2="497" y2="513.5"/><line x1="7" y1="531.5" x2="37" y2="531.5"/><line x1="7" y1="549.5" x2="37" y2="549.5"/></g><g stroke="#d4d4d4" shape-rendering="crispEdges"><line x1="61.5" y1="514" x2="61.5" y2="532"/><line x1="86.5" y1="514" x2="86.5" y2="532"/><line x1="111.5" y1="514" x2="111.5" y2="532"/><line x1="136.5" y1="514" x2="136.5" y2="532"/><line x1="185.5" y1="514" x2="185.5" y2="532"/><line x1="234.5" y1="514" x2="234.5" y2="532"/><line x1="283.5" y1="514" x2="283.5" y2="532"/><line x1="331.5" y1="514" x2="331.5" y2="532"/><line x1="380.5" y1="514" x2="380.5" y2="532"/><line x1="429.5" y1="514" x2="429.5" y2="532"/><line x1="478.5" y1="514" x2="478.5" y2="532"/></g><g stroke="#7aa0e0" shape-rendering="crispEdges"><line x1="61.5" y1="532" x2="61.5" y2="549"/><line x1="86.5" y1="532" x2="86.5" y2="549"/><line x1="111.5" y1="532" x2="111.5" y2="549"/><line x1="136.5" y1="532" x2="136.5" y2="549"/><line x1="185.5" y1="532" x2="185.5" y2="549"/><line x1="234.5" y1="532" x2="234.5" y2="549"/><line x1="283.5" y1="532" x2="283.5" y2="549"/><line x1="331.5" y1="532" x2="331.5" y2="549"/><line x1="380.5" y1="532" x2="380.5" y2="549"/><line x1="429.5" y1="532" x2="429.5" y2="549"/><line x1="478.5" y1="532" x2="478.5" y2="549"/></g><g stroke="#fff" shape-rendering="crispEdges"><line x1="7" y1="513.5" x2="36" y2="513.5" stroke="#000"/><line x1="7.5" y1="514" x2="7.5" y2="549"/><line x1="7" y1="514.5" x2="36" y2="514.5"/><line x1="7" y1="532.5" x2="36" y2="532.5"/><line x1="7.5" y1="478" x2="7.5" y2="513"/></g></svg><div class="a" style="left:497px;top:477px;width:17px;height:80px;background:#f7f7f2"></div><div class="a" style="left:498px;top:478px;width:15px;height:15px;border:1px solid #b8cff5;border-radius:2px;background:linear-gradient(135deg,#dce8fd,#c0d3f9 60%,#b4c8f4)"><svg class="a" style="left:-1px;top:-1px" width="15" height="15"><path d="M4 9 L7.5 5.5 L11 9" stroke="#4d6185" stroke-width="2" fill="none"/></svg></div><div class="a" style="left:498px;top:525px;width:15px;height:15px;border:1px solid #b8cff5;border-radius:2px;background:linear-gradient(135deg,#dce8fd,#c0d3f9 60%,#b4c8f4)"><svg class="a" style="left:-1px;top:-1px" width="15" height="15"><path d="M4.5 5.5h6M4.5 7.5h6M4.5 9.5h6" stroke="#9fb5e0" stroke-width="1"/></svg></div><div class="a" style="left:498px;top:541px;width:15px;height:15px;border:1px solid #b8cff5;border-radius:2px;background:linear-gradient(135deg,#dce8fd,#c0d3f9 60%,#b4c8f4)"><svg class="a" style="left:-1px;top:-1px" width="15" height="15"><path d="M4 6 L7.5 9.5 L11 6" stroke="#4d6185" stroke-width="2" fill="none"/></svg></div><div class="a" style="left:7px;top:557px;width:490px;height:16px;background:#f7f7f2"></div><div class="a" style="left:8px;top:558px;width:15px;height:14px;border:1px solid #b8cff5;border-radius:2px;background:linear-gradient(135deg,#dce8fd,#c0d3f9 60%,#b4c8f4)"><svg class="a" style="left:-1px;top:-1px" width="15" height="14"><path d="M9 3.5 L5.5 7 L9 10.5" stroke="#4d6185" stroke-width="2" fill="none"/></svg></div><div class="a" style="left:25px;top:558px;width:15px;height:14px;border:1px solid #b8cff5;border-radius:2px;background:linear-gradient(135deg,#dce8fd,#c0d3f9 60%,#b4c8f4)"><svg class="a" style="left:-1px;top:-1px" width="15" height="14"><path d="M5.5 4v6M7.5 4v6M9.5 4v6" stroke="#9fb5e0" stroke-width="1"/></svg></div><div class="a" style="left:482px;top:558px;width:14px;height:14px;border:1px solid #b8cff5;border-radius:2px;background:linear-gradient(135deg,#dce8fd,#c0d3f9 60%,#b4c8f4)"><svg class="a" style="left:-1px;top:-1px" width="14" height="14"><path d="M5.5 3.5 L9 7 L5.5 10.5" stroke="#4d6185" stroke-width="2" fill="none"/></svg></div><div class="a" style="left:497px;top:557px;width:17px;height:16px;background:#ece9d8"></div><div class="a" style="left:516px;top:47px;width:1px;height:528px;background:#7a7a70"></div><div class="a" style="left:517px;top:47px;width:1px;height:528px;background:#fff"></div><div class="a" style="left:516px;top:47px;width:110px;height:1px;background:#fff"></div><div class="gb" style="left:519px;top:54px;width:106px;height:132px"></div><div class="a" style="left:523px;top:52px;width:34px;height:5px;background:#ece9d8"></div><div class="t" style="left:525.40px;top:51px;font-size:11px;color:#000;transform:scaleX(0.964);">ABMN</div><div class="led" style="left:526px;top:60px;width:16px;height:16px;background:radial-gradient(circle at 45% 40%,#6aff6a 0,#22e822 40%,#14c014 75%,#0a900a 100%)"></div><div class="t" style="left:584.10px;top:66px;font-size:11px;color:#000;transform:scaleX(0.920);">Address</div><div class="t" style="left:526.00px;top:81px;font-size:11px;color:#000;">A</div><div class="edit" style="left:541px;top:80px;width:31px;height:18px;border-color:#808080 #fff #fff #808080;box-shadow:inset 1px 1px 0 #404040"></div><div class="t" style="left:544.20px;top:84px;font-size:11px;color:#000;">19</div><div class="a" style="left:588px;top:80px;width:29px;height:18px;background:#00ffff;border:1px solid;border-color:#808080 #fff #fff #808080;box-shadow:inset 1px 1px 0 #404040"></div><div class="t" style="left:590.20px;top:84px;font-size:11px;color:#000;">19</div><div class="t" style="left:525.10px;top:104px;font-size:11px;color:#000;">B</div><div class="edit" style="left:541px;top:103px;width:31px;height:18px;border-color:#808080 #fff #fff #808080;box-shadow:inset 1px 1px 0 #404040"></div><div class="t" style="left:544.50px;top:107px;font-size:11px;color:#000;">21</div><div class="a" style="left:588px;top:103px;width:29px;height:18px;background:#00ffff;border:1px solid;border-color:#808080 #fff #fff #808080;box-shadow:inset 1px 1px 0 #404040"></div><div class="t" style="left:590.50px;top:107px;font-size:11px;color:#000;">21</div><div class="t" style="left:525.10px;top:127px;font-size:11px;color:#000;">M</div><div class="edit" style="left:541px;top:126px;width:31px;height:18px;border-color:#808080 #fff #fff #808080;box-shadow:inset 1px 1px 0 #404040"></div><div class="t" style="left:544.80px;top:130px;font-size:11px;color:#000;">43</div><div class="a" style="left:588px;top:126px;width:29px;height:18px;background:#00ffff;border:1px solid;border-color:#808080 #fff #fff #808080;box-shadow:inset 1px 1px 0 #404040"></div><div class="t" style="left:590.80px;top:130px;font-size:11px;color:#000;">43</div><div class="t" style="left:525.10px;top:150px;font-size:11px;color:#000;">N</div><div class="edit" style="left:541px;top:149px;width:31px;height:18px;border-color:#808080 #fff #fff #808080;box-shadow:inset 1px 1px 0 #404040"></div><div class="t" style="left:544.80px;top:153px;font-size:11px;color:#000;">41</div><div class="a" style="left:588px;top:149px;width:29px;height:18px;background:#00ffff;border:1px solid;border-color:#808080 #fff #fff #808080;box-shadow:inset 1px 1px 0 #404040"></div><div class="t" style="left:590.80px;top:153px;font-size:11px;color:#000;">41</div><div class="a" style="left:520px;top:171px;width:104px;height:14px;background:#ece9d8;border:1px solid #000"></div><svg class="a" style="left:0;top:0" width="631" height="581"><path d="M553.5 172 H567 L565 184 H562.3 L560.6 178.5 L559 184 H556 Z" fill="#c00000"/><path d="M599.5 172 H614 L611.5 178 L608.5 184 H607.3 L609.5 178.5 L605 184 H603.8 L606 178.5 L602 178 Z" fill="#f8f000"/><path d="M604 184 L607 178 M608 184 L611 178" stroke="#a0a020" stroke-width="0.8"/></svg><div class="gb" style="left:519px;top:192px;width:106px;height:32px"></div><div class="a" style="left:524px;top:190px;width:52px;height:5px;background:#ece9d8"></div><div class="t" style="left:525.16px;top:189px;font-size:11px;color:#000;transform:scaleX(0.935);">Frequency</div><div class="t" style="left:525.10px;top:204px;font-size:11px;color:#000;">Hz</div><div class="a" style="left:564px;top:202px;width:53px;height:18px;background:#fdfdfb;border:1px solid;border-color:#808080 #d8d8d0 #e8e8e0 #808080;box-shadow:inset 1px 1px 0 #505050"></div><div class="t" style="left:569.50px;top:206px;font-size:11px;color:#a0a0a0;">8.33</div><div class="a" style="left:600px;top:204px;width:16px;height:16px;background:#ece9d8;border:1px solid;border-color:#ece9d8 #404040 #404040 #ece9d8;box-shadow:inset -1px -1px 0 #808080, inset 1px 1px 0 #fff"></div><svg class="a" style="left:600px;top:204px" width="16" height="16"><path d="M4 6 L11 6 L7.5 10 Z" fill="#8a8a7a"/></svg><div class="gb" style="left:519px;top:230px;width:106px;height:109px"></div><div class="a" style="left:524px;top:228px;width:36px;height:5px;background:#ece9d8"></div><div class="t" style="left:525.54px;top:226px;font-size:11px;color:#000;transform:scaleX(0.925);">Sender</div><svg class="a" style="left:602px;top:232px" width="18" height="18" viewBox="-9 -9 18 18"><circle r="7.6" fill="#f4f4f2"/><circle r="7" fill="#c8c8cc"/><path d="M6.2 -3.2 A7 7 0 0 1 -5.6 4.2" stroke="#6e6e6e" stroke-width="1.4" fill="none"/><path d="M5.2 -2.4 A6 6 0 0 1 -4.6 3.6" stroke="#e8e8ea" stroke-width="0.9" fill="none"/><circle cx="-1" cy="-1" r="3.5" fill="#d2d2d6"/></svg><div class="a" style="left:526px;top:256px;width:91px;height:59px;background:#fff;border:1px solid;border-color:#d0d0c8 #f8f8f8 #c8c8c0 #d0d0c8"></div><svg class="a" style="left:526px;top:256px" width="91" height="59" viewBox="526 256 91 59" ><path d="M544.8 290.8 A38.5 38.5 0 0 1 599.2 290.8" stroke="#000" stroke-width="1.1" fill="none"/><line x1="544.8" y1="290.8" x2="540.5" y2="286.5" stroke="#000" stroke-width="1.1"/><line x1="599.2" y1="290.8" x2="603.5" y2="286.5" stroke="#000" stroke-width="1.1"/><line x1="557.6" y1="283.4" x2="555.4" y2="277.8" stroke="#000" stroke-width="1.1"/><line x1="572.0" y1="280.5" x2="572.0" y2="274.5" stroke="#000" stroke-width="1.1"/><line x1="586.4" y1="283.4" x2="588.6" y2="277.8" stroke="#000" stroke-width="1.1"/><path d="M571.2 314.5 L555.0 299.6 L553.3 298.5 L545.1 290.4 L544.4 291.1 L552.5 299.3 L553.6 301.0 L568.5 317.2 Z" fill="#000"/></svg><div class="t" style="left:532.10px;top:278px;font-size:11px;color:#000;">0</div><div class="t" style="left:548.50px;top:267px;font-size:11px;color:#000;">2</div><div class="t" style="left:569.60px;top:263px;font-size:11px;color:#000;">4</div><div class="t" style="left:588.90px;top:267px;font-size:11px;color:#000;">6</div><div class="t" style="left:605.50px;top:278px;font-size:11px;color:#000;">8</div><div class="t" style="left:525.81px;top:320px;font-size:11px;color:#000;transform:scaleX(0.848);">mA</div><div class="edit" style="left:549px;top:318px;width:68px;height:18px;border-color:#808080 #fff #fff #808080;box-shadow:inset 1px 1px 0 #404040"></div><div class="gb" style="left:519px;top:347px;width:106px;height:131px"></div><div class="a" style="left:524px;top:345px;width:45px;height:5px;background:#ece9d8"></div><div class="t" style="left:525.12px;top:342px;font-size:11px;color:#000;transform:scaleX(0.979);">Receiver</div><svg class="a" style="left:602px;top:347px" width="18" height="18" viewBox="-9 -9 18 18"><circle r="7.6" fill="#f4f4f2"/><circle r="7" fill="#c8c8cc"/><path d="M6.2 -3.2 A7 7 0 0 1 -5.6 4.2" stroke="#6e6e6e" stroke-width="1.4" fill="none"/><path d="M5.2 -2.4 A6 6 0 0 1 -4.6 3.6" stroke="#e8e8ea" stroke-width="0.9" fill="none"/><circle cx="-1" cy="-1" r="3.5" fill="#d2d2d6"/></svg><div class="a" style="left:526px;top:371px;width:91px;height:59px;background:#fff;border:1px solid;border-color:#d0d0c8 #f8f8f8 #c8c8c0 #d0d0c8"></div><svg class="a" style="left:526px;top:371px" width="91" height="59" viewBox="526 371 91 59" ><path d="M544.8 405.8 A38.5 38.5 0 0 1 599.2 405.8" stroke="#000" stroke-width="1.1" fill="none"/><line x1="599.2" y1="405.8" x2="603.5" y2="401.5" stroke="#000" stroke-width="1.1"/><line x1="553.2" y1="400.5" x2="550.2" y2="395.3" stroke="#000" stroke-width="1.1"/><line x1="564.8" y1="396.2" x2="563.7" y2="390.3" stroke="#000" stroke-width="1.1"/><line x1="577.2" y1="395.9" x2="578.1" y2="389.9" stroke="#000" stroke-width="1.1"/><line x1="589.0" y1="399.6" x2="591.7" y2="394.2" stroke="#000" stroke-width="1.1"/><path d="M571.2 429.5 L555.0 414.6 L553.3 413.5 L545.1 405.4 L544.4 406.1 L552.5 414.3 L553.6 416.0 L568.5 432.2 Z" fill="#000"/></svg><div class="t" style="left:540.34px;top:381px;font-size:11px;color:#000;transform:scaleX(0.896);">0.1</div><div class="t" style="left:561.10px;top:377px;font-size:11px;color:#000;">1</div><div class="t" style="left:572.17px;top:377px;font-size:11px;color:#000;transform:scaleX(0.918);">10</div><div class="t" style="left:585.07px;top:379px;font-size:11px;color:#000;transform:scaleX(0.912);">100</div><div class="t" style="left:597.38px;top:385px;font-size:11px;color:#000;transform:scaleX(0.773);">1000</div><svg class="a" style="left:525px;top:431px" width="18" height="18" viewBox="-9 -9 18 18"><circle r="7.6" fill="#f4f4f2"/><circle r="7" fill="#c8c8cc"/><path d="M6.2 -3.2 A7 7 0 0 1 -5.6 4.2" stroke="#6e6e6e" stroke-width="1.4" fill="none"/><path d="M5.2 -2.4 A6 6 0 0 1 -4.6 3.6" stroke="#e8e8ea" stroke-width="0.9" fill="none"/><circle cx="-1" cy="-1" r="3.5" fill="#d2d2d6"/></svg><svg class="a" style="left:564px;top:431px" width="18" height="18" viewBox="-9 -9 18 18"><circle r="7.6" fill="#f4f4f2"/><circle r="7" fill="#c8c8cc"/><path d="M6.2 -3.2 A7 7 0 0 1 -5.6 4.2" stroke="#6e6e6e" stroke-width="1.4" fill="none"/><path d="M5.2 -2.4 A6 6 0 0 1 -4.6 3.6" stroke="#e8e8ea" stroke-width="0.9" fill="none"/><circle cx="-1" cy="-1" r="3.5" fill="#d2d2d6"/></svg><svg class="a" style="left:602px;top:431px" width="18" height="18" viewBox="-9 -9 18 18"><circle r="7.6" fill="#f4f4f2"/><circle r="7" fill="#c8c8cc"/><path d="M6.2 -3.2 A7 7 0 0 1 -5.6 4.2" stroke="#6e6e6e" stroke-width="1.4" fill="none"/><path d="M5.2 -2.4 A6 6 0 0 1 -4.6 3.6" stroke="#e8e8ea" stroke-width="0.9" fill="none"/><circle cx="-1" cy="-1" r="3.5" fill="#d2d2d6"/></svg><div class="t" style="left:525.39px;top:457px;font-size:11px;color:#000;transform:scaleX(0.873);">mV</div><div class="edit" style="left:549px;top:455px;width:68px;height:19px;border-color:#808080 #fff #fff #808080;box-shadow:inset 1px 1px 0 #404040"></div><div class="a" style="left:520px;top:478px;width:104px;height:6px;background:#fff;border:1px solid #000;box-shadow:inset 0 0 0 1px #d0d0c8"></div><div class="gb" style="left:519px;top:490px;width:106px;height:47px"></div><div class="a" style="left:524px;top:488px;width:65px;height:5px;background:#ece9d8"></div><div class="t" style="left:525.17px;top:488px;font-size:11px;color:#000;transform:scaleX(0.919);">Measurement</div><div class="a" style="left:520px;top:499px;width:104px;height:13px;background:#fff"></div><div class="t" style="left:547.52px;top:501px;font-size:11px;color:#000;transform:scaleX(0.955);">604 of 604</div><div class="a" style="left:520px;top:512px;width:104px;height:11px;background:#316ac5;border:1px solid #000"></div><div class="gb" style="left:519px;top:544px;width:106px;height:32px"></div><div class="a" style="left:524px;top:542px;width:66px;height:5px;background:#ece9d8"></div><div class="t" style="left:525.17px;top:541px;font-size:11px;color:#000;transform:scaleX(0.927);">Battery power</div><div class="t" style="left:525.90px;top:556px;font-size:11px;color:#000;transform:scaleX(0.972);">V</div><div class="a" style="left:549px;top:555px;width:69px;height:18px;background:#fbfbf8;border:1px solid;border-color:#8c8c80 #fff #fff #8c8c80;box-shadow:inset 1px 1px 0 #b0b0a4"></div><div class="t" style="left:551.80px;top:558px;font-size:11px;color:#a8a8a8;transform:scaleX(1.014);">4.79</div></body></html>
